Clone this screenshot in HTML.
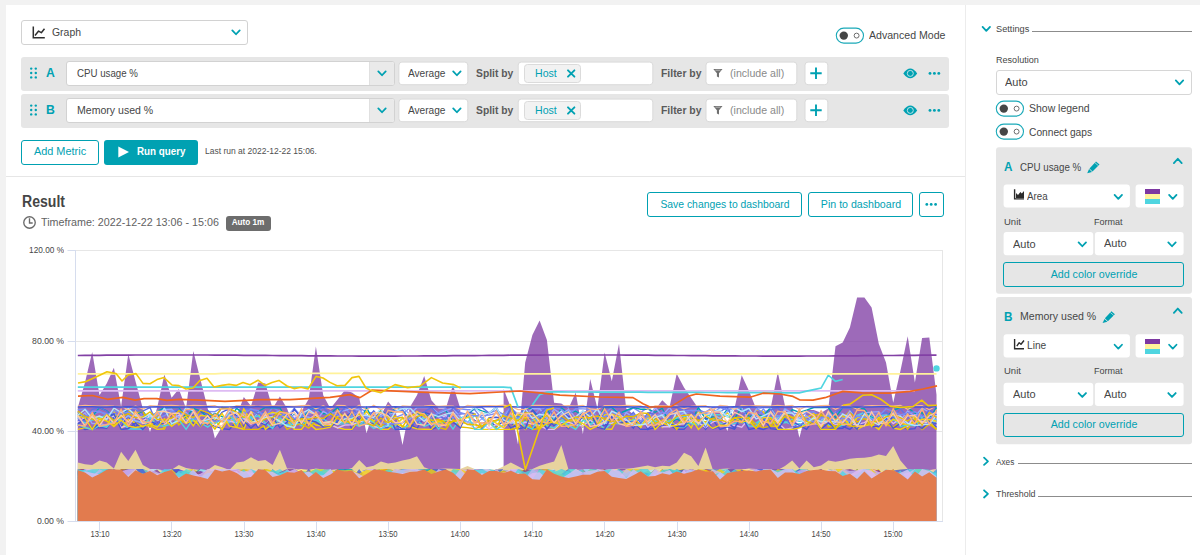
<!DOCTYPE html>
<html lang="en">
<head>
<meta charset="utf-8">
<title>Data explorer</title>
<style>
*{box-sizing:border-box;margin:0;padding:0}
html,body{width:1200px;height:555px;overflow:hidden;background:#f2f2f2}
body{font-family:"Liberation Sans",sans-serif;color:#454646;font-size:12px;position:relative}
.abs{position:absolute}
.t{position:absolute;white-space:nowrap;line-height:1}
.box{position:absolute;background:#fff;border:1px solid #d2d2d2;border-radius:3px}
.row{position:absolute;left:21px;width:928px;height:34px;background:#e6e6e6;border-radius:3px}
.card{position:absolute;left:996px;width:196px;height:146px;background:#e6e6e6;border-radius:3px}
svg{position:absolute;overflow:visible}
</style>
</head>
<body>
<div class="abs" style="left:6px;top:5px;width:959px;height:550px;background:#fff"></div>
<div class="abs" style="left:965px;top:5px;width:1px;height:550px;background:#ececec"></div>
<div class="abs" style="left:966px;top:5px;width:234px;height:550px;background:#fff"></div>

<div class="box" style="left:21px;top:20px;width:227px;height:25px;"></div>
<svg style="left:0;top:0" width="1200" height="555"><path d="M33.3 26.6 V37.7 H44.8" fill="none" stroke="#2f2f2f" stroke-width="1.5"/><path d="M35 35.4 L38.6 31.1 L41.3 32.7 L44.5 28.7" fill="none" stroke="#2f2f2f" stroke-width="1.5" stroke-linejoin="round"/></svg>
<div class="t" style="top:27.13px;font-size:10.6px;color:#454646;left:52.20px;transform-origin:0 50%;transform:scaleX(0.984);">Graph</div>
<svg style="left:0;top:0" width="1200" height="555"><path d="M232.30 30.35 L236.00 34.25 L239.70 30.35" fill="none" stroke="#00a1b2" stroke-width="1.8" stroke-linecap="round" stroke-linejoin="round"/></svg>
<svg style="left:0;top:0" width="1200" height="555"><rect x="836.3" y="28.1" width="27.2" height="15" rx="7.5" fill="#fff" stroke="#1aa9b8" stroke-width="1.1"/><circle cx="843.8" cy="35.6" r="4.2" fill="#454646"/><circle cx="856.6" cy="35.6" r="2.45" fill="none" stroke="#6d6d6d" stroke-width="1"/></svg>
<div class="t" style="top:30.43px;font-size:10.6px;color:#454646;left:869.30px;transform-origin:0 50%;transform:scaleX(0.999);">Advanced Mode</div>
<div class="row" style="top:57px"></div>
<svg style="left:0;top:0" width="1200" height="555"><circle cx="31.2" cy="68.6" r="1.2" fill="#00a1b2"/><circle cx="31.2" cy="73.0" r="1.2" fill="#00a1b2"/><circle cx="31.2" cy="77.4" r="1.2" fill="#00a1b2"/><circle cx="35.8" cy="68.6" r="1.2" fill="#00a1b2"/><circle cx="35.8" cy="73.0" r="1.2" fill="#00a1b2"/><circle cx="35.8" cy="77.4" r="1.2" fill="#00a1b2"/></svg>
<div class="t" style="top:66.00px;font-size:13px;color:#00a1b2;font-weight:bold;left:46.40px;transform-origin:0 50%;transform:scaleX(0.94);">A</div>
<div class="box" style="left:66px;top:61px;width:329px;height:25px;"></div>
<div class="abs" style="left:368.6px;top:62px;width:25.4px;height:23px;background:#eaeaea;border-left:1px solid #e0e0e0;border-radius:0 2px 2px 0"></div>
<div class="t" style="top:68.03px;font-size:10.6px;color:#454646;left:76.50px;transform-origin:0 50%;transform:scaleX(0.916);">CPU usage %</div>
<svg style="left:0;top:0" width="1200" height="555"><path d="M378.30 71.35 L382.00 75.25 L385.70 71.35" fill="none" stroke="#00a1b2" stroke-width="1.8" stroke-linecap="round" stroke-linejoin="round"/></svg>
<svg style="left:0;top:0" width="1200" height="555"><rect x="398.9" y="62.1" width="68.9" height="22.6" rx="3" fill="#fff" stroke="#dadada" stroke-width="1"/></svg>
<div class="t" style="top:68.03px;font-size:10.6px;color:#454646;left:407.80px;transform-origin:0 50%;transform:scaleX(0.954);">Average</div>
<svg style="left:0;top:0" width="1200" height="555"><path d="M453.20 71.35 L456.90 75.25 L460.60 71.35" fill="none" stroke="#00a1b2" stroke-width="1.8" stroke-linecap="round" stroke-linejoin="round"/></svg>
<div class="t" style="top:68.03px;font-size:10.6px;color:#5a5a5a;font-weight:bold;left:475.80px;transform-origin:0 50%;transform:scaleX(0.973);">Split by</div>
<svg style="left:0;top:0" width="1200" height="555"><rect x="518.2" y="62.1" width="134.6" height="22.6" rx="3" fill="#fff" stroke="#dadada" stroke-width="1"/></svg>
<div class="abs" style="left:524px;top:64px;width:57px;height:19px;background:#f2f2f2;border:1px solid #dbdbdb;border-radius:3.5px"></div>
<div class="t" style="top:68.13px;font-size:10.6px;color:#00a1b2;left:534.80px;transform-origin:0 50%;transform:scaleX(0.998);">Host</div>
<svg style="left:0;top:0" width="1200" height="555"><path d="M568 70.3 l6.4 6.4 m0 -6.4 l-6.4 6.4" stroke="#00a1b2" stroke-width="1.9" stroke-linecap="round" fill="none"/></svg>
<div class="t" style="top:68.03px;font-size:10.6px;color:#5a5a5a;font-weight:bold;left:660.50px;transform-origin:0 50%;transform:scaleX(0.982);">Filter by</div>
<svg style="left:0;top:0" width="1200" height="555"><rect x="706" y="62.1" width="90.8" height="22.6" rx="3" fill="#fff" stroke="#dadada" stroke-width="1"/></svg>
<svg style="left:0;top:0" width="1200" height="555"><path d="M713.3 69.0 H722.5 L719 73.3 V77.5 L716.9 76.5 V73.3 Z" fill="#6f6f6f"/><path d="M715.4 70.2 H720.4" stroke="#c9c9c9" stroke-width=".8"/></svg>
<div class="t" style="top:67.83px;font-size:10.6px;color:#8a8a8a;left:730.00px;transform-origin:0 50%;transform:scaleX(1.0);">(include all)</div>
<svg style="left:0;top:0" width="1200" height="555"><rect x="805" y="62.1" width="22.8" height="22.6" rx="3" fill="#fff" stroke="#dadada" stroke-width="1"/></svg>
<svg style="left:0;top:0" width="1200" height="555"><path d="M810.3 73.3 h11.4 M816 67.6 v11.4" stroke="#00a1b2" stroke-width="1.9" fill="none"/></svg>
<svg style="left:0;top:0" width="1200" height="555"><path d="M903.3 73.4 Q910.3 63.8 917.2 73.4 Q910.3 83.0 903.3 73.4z" fill="#00a1b2"/><circle cx="910.3" cy="73.4" r="3" fill="none" stroke="#cfe9ec" stroke-width=".9"/></svg>
<svg style="left:0;top:0" width="1200" height="555"><circle cx="930.0" cy="73.4" r="1.45" fill="#00a1b2"/><circle cx="934.4" cy="73.4" r="1.45" fill="#00a1b2"/><circle cx="938.8" cy="73.4" r="1.45" fill="#00a1b2"/></svg>
<div class="row" style="top:94px"></div>
<svg style="left:0;top:0" width="1200" height="555"><circle cx="31.2" cy="105.6" r="1.2" fill="#00a1b2"/><circle cx="31.2" cy="110.0" r="1.2" fill="#00a1b2"/><circle cx="31.2" cy="114.4" r="1.2" fill="#00a1b2"/><circle cx="35.8" cy="105.6" r="1.2" fill="#00a1b2"/><circle cx="35.8" cy="110.0" r="1.2" fill="#00a1b2"/><circle cx="35.8" cy="114.4" r="1.2" fill="#00a1b2"/></svg>
<div class="t" style="top:103.00px;font-size:13px;color:#00a1b2;font-weight:bold;left:46.40px;transform-origin:0 50%;transform:scaleX(0.94);">B</div>
<div class="box" style="left:66px;top:98px;width:329px;height:25px;"></div>
<div class="abs" style="left:368.6px;top:99px;width:25.4px;height:23px;background:#eaeaea;border-left:1px solid #e0e0e0;border-radius:0 2px 2px 0"></div>
<div class="t" style="top:105.03px;font-size:10.6px;color:#454646;left:76.50px;transform-origin:0 50%;transform:scaleX(0.996);">Memory used %</div>
<svg style="left:0;top:0" width="1200" height="555"><path d="M378.30 108.35 L382.00 112.25 L385.70 108.35" fill="none" stroke="#00a1b2" stroke-width="1.8" stroke-linecap="round" stroke-linejoin="round"/></svg>
<svg style="left:0;top:0" width="1200" height="555"><rect x="398.9" y="99.1" width="68.9" height="22.6" rx="3" fill="#fff" stroke="#dadada" stroke-width="1"/></svg>
<div class="t" style="top:105.03px;font-size:10.6px;color:#454646;left:407.80px;transform-origin:0 50%;transform:scaleX(0.954);">Average</div>
<svg style="left:0;top:0" width="1200" height="555"><path d="M453.20 108.35 L456.90 112.25 L460.60 108.35" fill="none" stroke="#00a1b2" stroke-width="1.8" stroke-linecap="round" stroke-linejoin="round"/></svg>
<div class="t" style="top:105.03px;font-size:10.6px;color:#5a5a5a;font-weight:bold;left:475.80px;transform-origin:0 50%;transform:scaleX(0.973);">Split by</div>
<svg style="left:0;top:0" width="1200" height="555"><rect x="518.2" y="99.1" width="134.6" height="22.6" rx="3" fill="#fff" stroke="#dadada" stroke-width="1"/></svg>
<div class="abs" style="left:524px;top:101px;width:57px;height:19px;background:#f2f2f2;border:1px solid #dbdbdb;border-radius:3.5px"></div>
<div class="t" style="top:105.13px;font-size:10.6px;color:#00a1b2;left:534.80px;transform-origin:0 50%;transform:scaleX(0.998);">Host</div>
<svg style="left:0;top:0" width="1200" height="555"><path d="M568 107.3 l6.4 6.4 m0 -6.4 l-6.4 6.4" stroke="#00a1b2" stroke-width="1.9" stroke-linecap="round" fill="none"/></svg>
<div class="t" style="top:105.03px;font-size:10.6px;color:#5a5a5a;font-weight:bold;left:660.50px;transform-origin:0 50%;transform:scaleX(0.982);">Filter by</div>
<svg style="left:0;top:0" width="1200" height="555"><rect x="706" y="99.1" width="90.8" height="22.6" rx="3" fill="#fff" stroke="#dadada" stroke-width="1"/></svg>
<svg style="left:0;top:0" width="1200" height="555"><path d="M713.3 106.0 H722.5 L719 110.3 V114.5 L716.9 113.5 V110.3 Z" fill="#6f6f6f"/><path d="M715.4 107.2 H720.4" stroke="#c9c9c9" stroke-width=".8"/></svg>
<div class="t" style="top:104.83px;font-size:10.6px;color:#8a8a8a;left:730.00px;transform-origin:0 50%;transform:scaleX(1.0);">(include all)</div>
<svg style="left:0;top:0" width="1200" height="555"><rect x="805" y="99.1" width="22.8" height="22.6" rx="3" fill="#fff" stroke="#dadada" stroke-width="1"/></svg>
<svg style="left:0;top:0" width="1200" height="555"><path d="M810.3 110.3 h11.4 M816 104.6 v11.4" stroke="#00a1b2" stroke-width="1.9" fill="none"/></svg>
<svg style="left:0;top:0" width="1200" height="555"><path d="M903.3 110.4 Q910.3 100.8 917.2 110.4 Q910.3 120.0 903.3 110.4z" fill="#00a1b2"/><circle cx="910.3" cy="110.4" r="3" fill="none" stroke="#cfe9ec" stroke-width=".9"/></svg>
<svg style="left:0;top:0" width="1200" height="555"><circle cx="930.0" cy="110.4" r="1.45" fill="#00a1b2"/><circle cx="934.4" cy="110.4" r="1.45" fill="#00a1b2"/><circle cx="938.8" cy="110.4" r="1.45" fill="#00a1b2"/></svg>
<div class="abs" style="left:21px;top:140px;width:77.5px;height:25px;border:1px solid #00a1b2;border-radius:3px;background:#fff"></div>
<div class="t" style="top:145.93px;font-size:10.6px;color:#00a1b2;left:-140.30px;width:400px;text-align:center;transform-origin:50% 50%;transform:scaleX(1.031);">Add Metric</div>
<div class="abs" style="left:104px;top:140px;width:94px;height:25px;border-radius:3px;background:#00a1b2"></div>
<svg style="left:0;top:0" width="1200" height="555"><path d="M118.3 146.4 L129 152 L118.3 157.6 Z" fill="#fff"/></svg>
<div class="t" style="top:145.93px;font-size:10.6px;color:#fff;font-weight:bold;left:137.00px;transform-origin:0 50%;transform:scaleX(0.925);">Run query</div>
<div class="t" style="top:146.78px;font-size:9px;color:#505050;left:204.70px;transform-origin:0 50%;transform:scaleX(0.944);">Last run at 2022-12-22 15:06.</div>
<div class="abs" style="left:6px;top:176px;width:959px;height:1px;background:#e6e6e6"></div>
<div class="t" style="top:193.56px;font-size:16px;color:#454646;font-weight:bold;left:21.70px;transform-origin:0 50%;transform:scaleX(0.879);">Result</div>
<svg style="left:0;top:0" width="1200" height="555"><circle cx="29.5" cy="222.5" r="5.75" fill="none" stroke="#6a6a6a" stroke-width="1.35"/><path d="M29.5 218.2 V223 H32.7" fill="none" stroke="#6a6a6a" stroke-width="1.35"/></svg>
<div class="t" style="top:216.38px;font-size:11.6px;color:#626262;left:41.00px;transform-origin:0 50%;transform:scaleX(0.925);">Timeframe: 2022-12-22 13:06 - 15:06</div>
<div class="abs" style="left:226px;top:216px;width:44.5px;height:14.5px;border-radius:3px;background:#6d6d6d"></div>
<div class="t" style="top:218.31px;font-size:9.2px;color:#fff;font-weight:bold;left:48.00px;width:400px;text-align:center;transform-origin:50% 50%;transform:scaleX(0.89);">Auto 1m</div>
<div class="abs" style="left:647px;top:192px;width:155px;height:25px;border:1px solid #00a1b2;border-radius:3px;background:#fff"></div>
<div class="t" style="top:198.53px;font-size:10.6px;color:#00a1b2;left:524.50px;width:400px;text-align:center;transform-origin:50% 50%;transform:scaleX(0.979);">Save changes to dashboard</div>
<div class="abs" style="left:808px;top:192px;width:105px;height:25px;border:1px solid #00a1b2;border-radius:3px;background:#fff"></div>
<div class="t" style="top:198.53px;font-size:10.6px;color:#00a1b2;left:660.50px;width:400px;text-align:center;transform-origin:50% 50%;transform:scaleX(1.002);">Pin to dashboard</div>
<div class="abs" style="left:919px;top:192px;width:25px;height:25px;border:1px solid #00a1b2;border-radius:3px;background:#fff"></div>
<svg style="left:0;top:0" width="1200" height="555"><circle cx="926.8" cy="204.4" r="1.4" fill="#00a1b2"/><circle cx="931.2" cy="204.4" r="1.4" fill="#00a1b2"/><circle cx="935.6" cy="204.4" r="1.4" fill="#00a1b2"/></svg>
<svg style="left:0;top:0" width="1200" height="555"><path d="M75 250.5 H942" stroke="#e6e6e6" stroke-width="1"/><path d="M75 341.5 H942" stroke="#e6e6e6" stroke-width="1"/><path d="M75 431.5 H942" stroke="#e6e6e6" stroke-width="1"/><path d="M67.5 250.5 H75" stroke="#d6ddee" stroke-width="1"/><path d="M67.5 341.5 H75" stroke="#d6ddee" stroke-width="1"/><path d="M67.5 431.5 H75" stroke="#d6ddee" stroke-width="1"/><path d="M67.5 521.5 H75" stroke="#d6ddee" stroke-width="1"/><path d="M77.8 521.4 L77.8 407.5 L85.0 382.4 L92.2 352.1 L99.5 395.3 L106.7 383.5 L113.9 367.7 L121.1 406.6 L128.3 353.9 L135.5 381.3 L142.8 408.4 L150.0 432.1 L157.2 407.5 L164.4 374.5 L171.6 397.8 L178.8 389.0 L186.1 408.4 L193.3 351.0 L200.5 379.7 L207.7 408.4 L214.9 438.5 L222.1 426.5 L229.4 408.2 L236.6 416.5 L243.8 397.1 L251.0 406.1 L258.2 382.6 L265.4 383.5 L272.6 408.4 L279.9 396.4 L287.1 408.4 L294.3 428.7 L301.5 411.5 L308.7 398.9 L315.9 346.5 L323.2 395.3 L330.4 408.4 L337.6 399.4 L344.8 390.3 L352.0 392.6 L359.2 397.8 L366.5 433.3 L373.7 410.8 L380.9 415.8 L388.1 401.4 L395.3 410.2 L402.5 445.0 L409.8 407.3 L417.0 395.3 L424.2 375.9 L431.4 400.3 L438.6 408.4 L445.8 408.4 L453.0 385.1 L460.3 408.4 L460.3 521.4 Z" fill="#7c38a1" fill-opacity=".75"/><path d="M503.6 521.4 L503.6 389.0 L510.8 407.3 L518.0 444.6 L525.2 362.5 L532.4 334.9 L539.6 320.5 L546.9 339.9 L554.1 402.8 L561.3 403.4 L568.5 408.4 L575.7 392.6 L582.9 433.9 L590.2 379.0 L597.4 408.4 L604.6 352.6 L611.8 381.3 L619.0 343.8 L626.2 408.4 L633.4 414.5 L640.7 428.7 L647.9 412.4 L655.1 409.4 L662.3 400.3 L669.5 407.3 L676.7 373.8 L684.0 387.6 L691.2 398.0 L698.4 408.4 L705.6 427.6 L712.8 408.5 L720.0 412.3 L727.3 431.0 L734.5 408.4 L741.7 375.2 L748.9 390.8 L756.1 408.4 L763.3 411.9 L770.6 408.4 L777.8 372.2 L785.0 406.1 L792.2 406.1 L799.4 437.8 L806.6 410.1 L813.8 410.1 L821.1 412.7 L828.3 408.4 L835.5 346.2 L842.7 342.6 L849.9 327.5 L857.1 297.4 L864.4 297.4 L871.6 307.6 L878.8 343.8 L886.0 362.5 L893.2 402.8 L900.4 371.1 L907.7 336.3 L914.9 382.6 L922.1 338.1 L929.3 337.4 L936.5 394.8 L936.5 521.4 Z" fill="#7c38a1" fill-opacity=".75"/><path d="M77.8 521.4 L77.8 462.6 L85.0 464.2 L92.2 464.9 L99.5 460.4 L106.7 462.6 L113.9 468.5 L121.1 451.8 L128.3 461.1 L135.5 449.8 L142.8 464.9 L150.0 469.0 L157.2 470.1 L164.4 470.1 L171.6 469.7 L178.8 464.9 L186.1 468.1 L193.3 469.2 L200.5 470.1 L207.7 469.9 L214.9 464.9 L222.1 467.2 L229.4 470.1 L236.6 462.6 L243.8 461.5 L251.0 457.2 L258.2 461.1 L265.4 459.9 L272.6 464.9 L279.9 449.8 L287.1 468.5 L294.3 468.8 L301.5 470.0 L308.7 470.3 L315.9 468.6 L323.2 469.4 L330.4 470.1 L337.6 469.3 L344.8 470.3 L352.0 468.1 L359.2 459.9 L366.5 467.2 L373.7 465.8 L380.9 461.5 L388.1 463.5 L395.3 462.6 L402.5 460.4 L409.8 459.0 L417.0 456.3 L424.2 467.2 L431.4 469.9 L438.6 468.9 L445.8 468.5 L453.0 468.8 L460.3 468.9 L467.5 466.0 L474.7 469.0 L481.9 469.9 L489.1 469.4 L496.3 469.7 L503.6 466.3 L510.8 462.6 L518.0 466.3 L525.2 469.9 L532.4 469.1 L539.6 465.8 L546.9 463.5 L554.1 461.5 L561.3 445.0 L568.5 469.4 L575.7 469.7 L582.9 469.9 L590.2 469.9 L597.4 470.0 L604.6 470.0 L611.8 469.2 L619.0 468.7 L626.2 468.8 L633.4 468.1 L640.7 466.7 L647.9 465.4 L655.1 467.2 L662.3 465.8 L669.5 466.3 L676.7 462.6 L684.0 452.7 L691.2 456.3 L698.4 466.0 L705.6 447.5 L712.8 469.4 L720.0 468.9 L727.3 468.6 L734.5 469.6 L741.7 469.6 L748.9 468.6 L756.1 469.0 L763.3 470.0 L770.6 470.1 L777.8 470.1 L785.0 466.0 L792.2 460.4 L799.4 468.5 L806.6 460.4 L813.8 467.2 L821.1 465.4 L828.3 460.4 L835.5 461.7 L842.7 460.4 L849.9 458.8 L857.1 458.1 L864.4 457.7 L871.6 456.8 L878.8 454.5 L886.0 456.1 L893.2 446.1 L900.4 460.4 L907.7 469.0 L914.9 469.9 L922.1 469.8 L929.3 469.9 L936.5 469.3 L936.5 521.4 Z" fill="#e8d39e"/><path d="M77.8 521.4 L77.8 476.2 L85.0 474.3 L92.2 477.8 L99.5 469.0 L106.7 475.0 L113.9 473.8 L121.1 472.2 L128.3 469.0 L135.5 474.2 L142.8 469.0 L150.0 473.2 L157.2 472.9 L164.4 473.0 L171.6 479.1 L178.8 474.0 L186.1 477.1 L193.3 479.3 L200.5 469.6 L207.7 477.3 L214.9 473.6 L222.1 470.5 L229.4 472.6 L236.6 475.4 L243.8 473.0 L251.0 472.6 L258.2 469.8 L265.4 478.1 L272.6 472.5 L279.9 476.3 L287.1 476.0 L294.3 469.9 L301.5 473.2 L308.7 472.5 L315.9 470.1 L323.2 469.0 L330.4 474.0 L337.6 471.9 L344.8 473.2 L352.0 473.1 L359.2 470.9 L366.5 473.8 L373.7 472.9 L380.9 473.5 L388.1 469.0 L395.3 470.8 L402.5 469.0 L409.8 469.0 L417.0 476.2 L424.2 472.5 L431.4 469.0 L438.6 469.1 L445.8 477.7 L453.0 477.9 L460.3 474.0 L467.5 478.5 L474.7 476.4 L481.9 478.5 L489.1 471.2 L496.3 469.8 L503.6 469.0 L510.8 477.5 L518.0 470.6 L525.2 471.3 L532.4 477.6 L539.6 469.0 L546.9 469.0 L554.1 476.7 L561.3 469.0 L568.5 474.5 L575.7 473.4 L582.9 469.0 L590.2 469.2 L597.4 477.4 L604.6 474.1 L611.8 473.1 L619.0 475.2 L626.2 477.0 L633.4 475.5 L640.7 470.6 L647.9 479.1 L655.1 472.6 L662.3 474.0 L669.5 479.1 L676.7 475.3 L684.0 471.7 L691.2 473.1 L698.4 478.6 L705.6 469.0 L712.8 469.7 L720.0 469.0 L727.3 478.1 L734.5 476.1 L741.7 478.9 L748.9 469.9 L756.1 476.1 L763.3 477.8 L770.6 474.2 L777.8 469.0 L785.0 469.4 L792.2 476.2 L799.4 477.5 L806.6 469.0 L813.8 472.4 L821.1 470.8 L828.3 478.3 L835.5 478.7 L842.7 471.0 L849.9 474.2 L857.1 478.5 L864.4 469.0 L871.6 471.6 L878.8 469.6 L886.0 478.3 L893.2 469.0 L900.4 478.6 L907.7 469.0 L914.9 473.8 L922.1 475.2 L929.3 472.6 L936.5 469.0 L936.5 521.4 Z" fill="#4556d7" fill-opacity=".78"/><path d="M77.8 521.4 L77.8 476.1 L85.0 477.8 L92.2 472.9 L99.5 476.5 L106.7 478.0 L113.9 477.4 L121.1 478.7 L128.3 476.9 L135.5 475.6 L142.8 475.6 L150.0 470.1 L157.2 475.8 L164.4 473.3 L171.6 477.2 L178.8 475.1 L186.1 479.1 L193.3 476.3 L200.5 479.2 L207.7 470.4 L214.9 472.6 L222.1 477.1 L229.4 473.6 L236.6 469.0 L243.8 478.1 L251.0 469.4 L258.2 474.1 L265.4 473.3 L272.6 469.2 L279.9 474.6 L287.1 473.2 L294.3 471.0 L301.5 469.0 L308.7 475.2 L315.9 469.2 L323.2 470.7 L330.4 471.6 L337.6 474.4 L344.8 475.1 L352.0 478.7 L359.2 477.8 L366.5 478.5 L373.7 470.3 L380.9 476.2 L388.1 477.4 L395.3 478.3 L402.5 469.1 L409.8 469.0 L417.0 471.2 L424.2 475.9 L431.4 476.4 L438.6 475.8 L445.8 473.8 L453.0 477.4 L460.3 473.9 L467.5 476.2 L474.7 469.0 L481.9 469.0 L489.1 472.7 L496.3 476.4 L503.6 469.0 L510.8 475.6 L518.0 475.0 L525.2 479.4 L532.4 474.7 L539.6 473.6 L546.9 473.2 L554.1 476.9 L561.3 473.2 L568.5 479.3 L575.7 476.1 L582.9 478.3 L590.2 474.5 L597.4 478.9 L604.6 479.1 L611.8 475.7 L619.0 476.5 L626.2 472.2 L633.4 472.9 L640.7 470.2 L647.9 471.3 L655.1 470.6 L662.3 469.0 L669.5 474.6 L676.7 475.4 L684.0 469.0 L691.2 477.5 L698.4 470.5 L705.6 471.5 L712.8 478.8 L720.0 469.2 L727.3 469.0 L734.5 471.7 L741.7 470.4 L748.9 469.5 L756.1 477.7 L763.3 473.0 L770.6 473.2 L777.8 469.2 L785.0 469.5 L792.2 469.3 L799.4 472.2 L806.6 469.0 L813.8 471.0 L821.1 470.9 L828.3 476.6 L835.5 479.0 L842.7 477.7 L849.9 475.0 L857.1 478.1 L864.4 469.2 L871.6 472.5 L878.8 471.7 L886.0 471.7 L893.2 471.1 L900.4 473.4 L907.7 479.3 L914.9 469.6 L922.1 470.2 L929.3 473.2 L936.5 472.8 L936.5 521.4 Z" fill="#fff29a" fill-opacity=".78"/><path d="M77.8 521.4 L77.8 471.3 L85.0 478.6 L92.2 470.4 L99.5 476.3 L106.7 478.5 L113.9 476.1 L121.1 470.5 L128.3 476.9 L135.5 470.3 L142.8 469.0 L150.0 473.3 L157.2 474.7 L164.4 473.5 L171.6 471.0 L178.8 470.0 L186.1 471.8 L193.3 471.5 L200.5 478.4 L207.7 477.6 L214.9 476.3 L222.1 470.3 L229.4 475.6 L236.6 472.4 L243.8 479.2 L251.0 478.6 L258.2 476.1 L265.4 471.2 L272.6 470.9 L279.9 471.1 L287.1 475.8 L294.3 473.1 L301.5 473.7 L308.7 473.7 L315.9 477.9 L323.2 469.0 L330.4 476.9 L337.6 469.0 L344.8 469.0 L352.0 479.2 L359.2 473.8 L366.5 469.4 L373.7 469.0 L380.9 473.9 L388.1 476.1 L395.3 476.8 L402.5 469.0 L409.8 476.8 L417.0 472.3 L424.2 477.6 L431.4 473.0 L438.6 469.0 L445.8 477.7 L453.0 469.4 L460.3 473.2 L467.5 469.0 L474.7 470.8 L481.9 476.5 L489.1 469.0 L496.3 473.4 L503.6 479.1 L510.8 479.3 L518.0 473.4 L525.2 473.9 L532.4 475.7 L539.6 477.6 L546.9 475.2 L554.1 475.5 L561.3 469.1 L568.5 479.3 L575.7 470.2 L582.9 469.1 L590.2 477.9 L597.4 469.0 L604.6 470.7 L611.8 469.0 L619.0 475.8 L626.2 474.8 L633.4 474.6 L640.7 469.0 L647.9 472.2 L655.1 475.0 L662.3 474.1 L669.5 476.0 L676.7 478.8 L684.0 478.1 L691.2 469.2 L698.4 475.9 L705.6 469.0 L712.8 476.3 L720.0 476.1 L727.3 473.1 L734.5 477.0 L741.7 474.8 L748.9 469.0 L756.1 469.0 L763.3 469.5 L770.6 471.7 L777.8 469.0 L785.0 469.0 L792.2 472.7 L799.4 470.6 L806.6 478.8 L813.8 470.4 L821.1 473.9 L828.3 470.2 L835.5 471.5 L842.7 475.9 L849.9 478.8 L857.1 469.0 L864.4 477.8 L871.6 473.6 L878.8 475.2 L886.0 475.7 L893.2 470.3 L900.4 469.0 L907.7 476.2 L914.9 471.4 L922.1 475.7 L929.3 472.6 L936.5 474.6 L936.5 521.4 Z" fill="#c396e0" fill-opacity=".78"/><path d="M77.8 521.4 L77.8 477.3 L85.0 477.4 L92.2 476.8 L99.5 469.0 L106.7 473.3 L113.9 476.7 L121.1 469.0 L128.3 469.0 L135.5 473.9 L142.8 477.7 L150.0 477.0 L157.2 478.3 L164.4 475.2 L171.6 478.3 L178.8 476.4 L186.1 476.2 L193.3 472.4 L200.5 469.0 L207.7 470.2 L214.9 474.3 L222.1 474.3 L229.4 473.0 L236.6 474.8 L243.8 475.2 L251.0 478.6 L258.2 476.0 L265.4 469.0 L272.6 477.8 L279.9 473.2 L287.1 471.7 L294.3 469.0 L301.5 476.7 L308.7 476.1 L315.9 476.3 L323.2 474.5 L330.4 473.9 L337.6 469.0 L344.8 469.0 L352.0 469.0 L359.2 479.1 L366.5 479.0 L373.7 470.7 L380.9 469.0 L388.1 473.6 L395.3 472.2 L402.5 479.4 L409.8 474.6 L417.0 469.0 L424.2 469.3 L431.4 469.0 L438.6 469.0 L445.8 476.3 L453.0 478.0 L460.3 477.5 L467.5 473.0 L474.7 471.0 L481.9 469.0 L489.1 470.6 L496.3 471.5 L503.6 470.0 L510.8 473.8 L518.0 472.6 L525.2 478.9 L532.4 469.8 L539.6 476.5 L546.9 469.0 L554.1 471.5 L561.3 475.7 L568.5 477.8 L575.7 476.3 L582.9 471.6 L590.2 470.8 L597.4 478.0 L604.6 478.5 L611.8 473.0 L619.0 472.3 L626.2 474.6 L633.4 476.6 L640.7 472.0 L647.9 479.2 L655.1 475.7 L662.3 473.7 L669.5 469.0 L676.7 471.5 L684.0 469.0 L691.2 473.6 L698.4 476.5 L705.6 476.3 L712.8 469.0 L720.0 470.8 L727.3 475.6 L734.5 479.1 L741.7 473.3 L748.9 471.1 L756.1 474.2 L763.3 476.2 L770.6 471.2 L777.8 469.0 L785.0 476.6 L792.2 478.9 L799.4 475.2 L806.6 474.2 L813.8 471.0 L821.1 476.9 L828.3 469.6 L835.5 470.3 L842.7 473.2 L849.9 476.9 L857.1 469.0 L864.4 475.6 L871.6 469.4 L878.8 476.5 L886.0 476.7 L893.2 470.1 L900.4 475.8 L907.7 469.0 L914.9 473.3 L922.1 477.1 L929.3 476.6 L936.5 474.3 L936.5 521.4 Z" fill="#00a1b2" fill-opacity=".78"/><path d="M77.8 521.4 L77.8 471.2 L85.0 469.0 L92.2 477.6 L99.5 474.6 L106.7 476.8 L113.9 469.0 L121.1 477.6 L128.3 478.7 L135.5 478.6 L142.8 474.6 L150.0 469.0 L157.2 469.0 L164.4 470.4 L171.6 469.0 L178.8 469.0 L186.1 475.3 L193.3 477.1 L200.5 469.0 L207.7 470.3 L214.9 479.0 L222.1 471.3 L229.4 474.7 L236.6 474.8 L243.8 475.3 L251.0 477.3 L258.2 479.3 L265.4 475.9 L272.6 475.1 L279.9 469.0 L287.1 477.9 L294.3 469.0 L301.5 476.8 L308.7 475.0 L315.9 469.3 L323.2 469.3 L330.4 474.1 L337.6 478.8 L344.8 473.6 L352.0 474.8 L359.2 469.0 L366.5 477.0 L373.7 474.9 L380.9 469.0 L388.1 479.0 L395.3 474.4 L402.5 469.5 L409.8 470.0 L417.0 478.9 L424.2 478.9 L431.4 478.6 L438.6 469.0 L445.8 476.2 L453.0 470.2 L460.3 469.0 L467.5 475.2 L474.7 476.0 L481.9 469.0 L489.1 471.8 L496.3 476.2 L503.6 470.6 L510.8 475.5 L518.0 476.0 L525.2 479.3 L532.4 470.1 L539.6 469.0 L546.9 471.6 L554.1 469.0 L561.3 479.1 L568.5 476.5 L575.7 473.6 L582.9 469.0 L590.2 469.0 L597.4 474.6 L604.6 476.3 L611.8 474.1 L619.0 473.3 L626.2 469.0 L633.4 477.1 L640.7 469.6 L647.9 470.4 L655.1 469.3 L662.3 469.9 L669.5 472.0 L676.7 475.4 L684.0 475.5 L691.2 474.9 L698.4 469.8 L705.6 478.4 L712.8 477.0 L720.0 470.2 L727.3 476.3 L734.5 478.6 L741.7 479.0 L748.9 472.6 L756.1 475.4 L763.3 469.0 L770.6 469.0 L777.8 469.0 L785.0 476.1 L792.2 478.3 L799.4 478.2 L806.6 473.3 L813.8 470.7 L821.1 473.9 L828.3 476.5 L835.5 474.3 L842.7 471.8 L849.9 471.1 L857.1 470.2 L864.4 469.0 L871.6 471.3 L878.8 477.9 L886.0 469.1 L893.2 475.8 L900.4 472.4 L907.7 474.8 L914.9 470.4 L922.1 476.9 L929.3 476.3 L936.5 476.4 L936.5 521.4 Z" fill="#b4e5f9" fill-opacity=".78"/><path d="M77.8 521.4 L77.8 477.5 L85.0 469.0 L92.2 472.3 L99.5 475.4 L106.7 474.5 L113.9 469.0 L121.1 473.2 L128.3 476.5 L135.5 469.5 L142.8 471.4 L150.0 469.0 L157.2 478.1 L164.4 473.6 L171.6 469.4 L178.8 469.1 L186.1 469.0 L193.3 478.9 L200.5 475.8 L207.7 477.9 L214.9 477.1 L222.1 469.0 L229.4 472.2 L236.6 469.0 L243.8 474.8 L251.0 469.0 L258.2 473.9 L265.4 476.2 L272.6 469.9 L279.9 469.0 L287.1 478.1 L294.3 472.1 L301.5 471.8 L308.7 476.7 L315.9 474.9 L323.2 477.6 L330.4 476.9 L337.6 476.3 L344.8 472.0 L352.0 471.4 L359.2 476.9 L366.5 479.2 L373.7 475.4 L380.9 471.1 L388.1 477.1 L395.3 475.6 L402.5 476.9 L409.8 469.7 L417.0 472.7 L424.2 478.6 L431.4 478.1 L438.6 474.5 L445.8 472.7 L453.0 471.6 L460.3 478.3 L467.5 477.4 L474.7 470.9 L481.9 474.4 L489.1 475.9 L496.3 475.6 L503.6 469.0 L510.8 475.6 L518.0 472.5 L525.2 475.0 L532.4 474.3 L539.6 469.0 L546.9 469.0 L554.1 474.9 L561.3 477.0 L568.5 470.5 L575.7 476.9 L582.9 479.3 L590.2 469.0 L597.4 474.2 L604.6 469.4 L611.8 474.4 L619.0 469.0 L626.2 473.7 L633.4 477.4 L640.7 479.2 L647.9 472.6 L655.1 471.5 L662.3 469.0 L669.5 478.3 L676.7 471.8 L684.0 474.8 L691.2 473.2 L698.4 477.6 L705.6 475.9 L712.8 473.0 L720.0 469.0 L727.3 478.0 L734.5 473.4 L741.7 469.5 L748.9 469.0 L756.1 477.0 L763.3 477.8 L770.6 469.0 L777.8 469.0 L785.0 473.5 L792.2 478.7 L799.4 469.0 L806.6 474.6 L813.8 469.0 L821.1 471.8 L828.3 469.3 L835.5 477.4 L842.7 469.8 L849.9 476.7 L857.1 474.4 L864.4 469.0 L871.6 469.2 L878.8 477.1 L886.0 476.7 L893.2 474.5 L900.4 473.0 L907.7 474.7 L914.9 477.9 L922.1 476.3 L929.3 470.5 L936.5 469.0 L936.5 521.4 Z" fill="#ffd0ab" fill-opacity=".78"/><path d="M77.8 521.4 L77.8 478.9 L85.0 472.5 L92.2 470.1 L99.5 478.9 L106.7 469.1 L113.9 477.9 L121.1 472.0 L128.3 472.7 L135.5 471.7 L142.8 475.6 L150.0 474.2 L157.2 472.3 L164.4 474.2 L171.6 471.3 L178.8 473.9 L186.1 474.0 L193.3 479.1 L200.5 471.8 L207.7 473.4 L214.9 476.5 L222.1 470.0 L229.4 469.8 L236.6 473.8 L243.8 477.2 L251.0 473.6 L258.2 478.1 L265.4 477.8 L272.6 474.1 L279.9 478.2 L287.1 474.0 L294.3 473.1 L301.5 478.9 L308.7 471.6 L315.9 478.4 L323.2 470.4 L330.4 469.9 L337.6 473.1 L344.8 478.7 L352.0 473.2 L359.2 474.8 L366.5 469.0 L373.7 477.7 L380.9 469.0 L388.1 469.0 L395.3 470.4 L402.5 469.4 L409.8 477.0 L417.0 469.0 L424.2 473.4 L431.4 469.0 L438.6 469.0 L445.8 477.3 L453.0 469.7 L460.3 469.0 L467.5 478.6 L474.7 475.1 L481.9 470.1 L489.1 477.4 L496.3 469.0 L503.6 476.0 L510.8 469.4 L518.0 477.6 L525.2 473.2 L532.4 469.0 L539.6 476.8 L546.9 476.2 L554.1 473.2 L561.3 475.5 L568.5 478.9 L575.7 477.1 L582.9 477.4 L590.2 469.0 L597.4 471.1 L604.6 469.0 L611.8 477.3 L619.0 469.8 L626.2 478.0 L633.4 472.9 L640.7 471.6 L647.9 475.0 L655.1 469.0 L662.3 472.6 L669.5 472.3 L676.7 469.0 L684.0 478.1 L691.2 469.0 L698.4 471.7 L705.6 474.6 L712.8 469.6 L720.0 476.1 L727.3 469.0 L734.5 472.3 L741.7 475.0 L748.9 470.0 L756.1 474.0 L763.3 477.2 L770.6 470.3 L777.8 478.8 L785.0 469.4 L792.2 476.3 L799.4 471.6 L806.6 469.0 L813.8 472.2 L821.1 471.3 L828.3 475.5 L835.5 479.3 L842.7 479.0 L849.9 477.5 L857.1 471.8 L864.4 474.1 L871.6 473.1 L878.8 469.0 L886.0 477.8 L893.2 476.6 L900.4 471.4 L907.7 479.1 L914.9 479.3 L922.1 475.0 L929.3 478.1 L936.5 475.0 L936.5 521.4 Z" fill="#f5d30f" fill-opacity=".78"/><path d="M77.8 521.4 L77.8 476.6 L85.0 472.2 L92.2 472.2 L99.5 476.9 L106.7 471.7 L113.9 473.6 L121.1 477.7 L128.3 469.0 L135.5 476.4 L142.8 477.5 L150.0 478.2 L157.2 471.6 L164.4 469.0 L171.6 469.8 L178.8 474.5 L186.1 476.1 L193.3 479.2 L200.5 471.5 L207.7 472.5 L214.9 475.1 L222.1 471.5 L229.4 473.9 L236.6 469.0 L243.8 470.4 L251.0 476.3 L258.2 469.0 L265.4 478.8 L272.6 472.9 L279.9 474.4 L287.1 476.5 L294.3 478.7 L301.5 469.9 L308.7 479.2 L315.9 472.6 L323.2 469.0 L330.4 477.6 L337.6 476.9 L344.8 471.9 L352.0 473.2 L359.2 471.5 L366.5 469.4 L373.7 477.2 L380.9 475.6 L388.1 475.7 L395.3 478.8 L402.5 469.0 L409.8 469.8 L417.0 470.6 L424.2 479.3 L431.4 469.1 L438.6 470.3 L445.8 473.7 L453.0 470.3 L460.3 473.8 L467.5 476.6 L474.7 478.1 L481.9 476.5 L489.1 478.9 L496.3 475.3 L503.6 470.2 L510.8 470.9 L518.0 469.0 L525.2 470.7 L532.4 476.1 L539.6 472.6 L546.9 474.0 L554.1 469.7 L561.3 473.0 L568.5 476.1 L575.7 471.5 L582.9 469.0 L590.2 476.7 L597.4 469.0 L604.6 479.2 L611.8 476.2 L619.0 476.5 L626.2 470.3 L633.4 469.0 L640.7 470.3 L647.9 475.4 L655.1 469.0 L662.3 475.4 L669.5 476.4 L676.7 469.0 L684.0 471.7 L691.2 470.9 L698.4 471.2 L705.6 469.0 L712.8 473.6 L720.0 469.1 L727.3 470.9 L734.5 469.0 L741.7 474.0 L748.9 470.5 L756.1 472.4 L763.3 475.6 L770.6 476.8 L777.8 471.8 L785.0 478.4 L792.2 469.0 L799.4 477.6 L806.6 479.0 L813.8 478.1 L821.1 469.0 L828.3 475.2 L835.5 477.6 L842.7 479.0 L849.9 478.9 L857.1 470.9 L864.4 471.6 L871.6 470.9 L878.8 470.4 L886.0 478.6 L893.2 472.2 L900.4 474.9 L907.7 469.4 L914.9 469.4 L922.1 469.0 L929.3 478.6 L936.5 469.0 L936.5 521.4 Z" fill="#7c8cf4" fill-opacity=".78"/><path d="M77.8 521.4 L77.8 469.0 L85.0 469.0 L92.2 478.1 L99.5 476.9 L106.7 478.0 L113.9 478.9 L121.1 469.0 L128.3 469.5 L135.5 471.6 L142.8 469.3 L150.0 471.7 L157.2 475.9 L164.4 478.1 L171.6 478.2 L178.8 470.1 L186.1 476.9 L193.3 475.5 L200.5 474.2 L207.7 479.1 L214.9 476.2 L222.1 475.9 L229.4 470.6 L236.6 474.9 L243.8 475.4 L251.0 469.0 L258.2 473.2 L265.4 469.0 L272.6 471.8 L279.9 479.0 L287.1 474.3 L294.3 474.0 L301.5 469.9 L308.7 475.1 L315.9 470.8 L323.2 472.8 L330.4 476.7 L337.6 469.0 L344.8 478.3 L352.0 469.4 L359.2 477.3 L366.5 479.3 L373.7 476.9 L380.9 470.1 L388.1 469.0 L395.3 479.3 L402.5 473.4 L409.8 473.4 L417.0 469.6 L424.2 477.1 L431.4 473.3 L438.6 475.1 L445.8 469.2 L453.0 476.2 L460.3 469.0 L467.5 475.9 L474.7 476.7 L481.9 470.8 L489.1 473.3 L496.3 478.0 L503.6 471.6 L510.8 478.4 L518.0 469.7 L525.2 470.9 L532.4 469.8 L539.6 471.7 L546.9 475.0 L554.1 474.5 L561.3 474.5 L568.5 469.0 L575.7 478.3 L582.9 469.0 L590.2 479.1 L597.4 476.8 L604.6 476.2 L611.8 469.0 L619.0 473.2 L626.2 474.7 L633.4 469.0 L640.7 476.5 L647.9 473.7 L655.1 472.9 L662.3 470.2 L669.5 470.2 L676.7 471.5 L684.0 475.1 L691.2 475.4 L698.4 477.5 L705.6 469.1 L712.8 471.3 L720.0 470.3 L727.3 477.3 L734.5 474.0 L741.7 469.9 L748.9 472.3 L756.1 477.8 L763.3 473.7 L770.6 469.0 L777.8 476.5 L785.0 477.0 L792.2 475.7 L799.4 470.8 L806.6 469.1 L813.8 477.5 L821.1 477.5 L828.3 476.3 L835.5 475.4 L842.7 473.0 L849.9 477.4 L857.1 475.4 L864.4 477.1 L871.6 469.0 L878.8 470.5 L886.0 478.1 L893.2 469.0 L900.4 478.1 L907.7 474.7 L914.9 469.0 L922.1 469.7 L929.3 470.4 L936.5 474.1 L936.5 521.4 Z" fill="#ef651f" fill-opacity=".78"/><path d="M77.8 521.4 L77.8 477.0 L85.0 471.6 L92.2 478.1 L99.5 476.8 L106.7 474.6 L113.9 478.9 L121.1 474.5 L128.3 469.7 L135.5 470.9 L142.8 473.3 L150.0 471.6 L157.2 473.7 L164.4 477.6 L171.6 472.0 L178.8 474.4 L186.1 470.3 L193.3 469.0 L200.5 474.1 L207.7 472.4 L214.9 470.2 L222.1 474.2 L229.4 476.6 L236.6 470.6 L243.8 469.0 L251.0 469.9 L258.2 470.8 L265.4 469.0 L272.6 471.1 L279.9 471.5 L287.1 473.8 L294.3 475.5 L301.5 471.7 L308.7 478.2 L315.9 474.2 L323.2 469.8 L330.4 470.7 L337.6 471.7 L344.8 476.3 L352.0 474.2 L359.2 473.8 L366.5 471.8 L373.7 474.4 L380.9 471.1 L388.1 469.0 L395.3 477.1 L402.5 471.4 L409.8 469.9 L417.0 474.6 L424.2 473.4 L431.4 469.0 L438.6 478.9 L445.8 472.7 L453.0 477.4 L460.3 469.8 L467.5 469.0 L474.7 473.0 L481.9 478.1 L489.1 472.4 L496.3 472.8 L503.6 470.6 L510.8 473.1 L518.0 471.6 L525.2 469.2 L532.4 473.0 L539.6 474.4 L546.9 469.0 L554.1 476.8 L561.3 471.0 L568.5 474.6 L575.7 470.1 L582.9 477.9 L590.2 469.0 L597.4 475.0 L604.6 478.7 L611.8 476.0 L619.0 474.5 L626.2 479.2 L633.4 474.3 L640.7 474.2 L647.9 470.8 L655.1 475.1 L662.3 476.1 L669.5 476.6 L676.7 470.3 L684.0 469.0 L691.2 472.9 L698.4 476.7 L705.6 469.6 L712.8 474.6 L720.0 476.8 L727.3 477.8 L734.5 469.9 L741.7 469.5 L748.9 471.6 L756.1 473.6 L763.3 472.5 L770.6 476.6 L777.8 469.0 L785.0 475.1 L792.2 471.6 L799.4 469.4 L806.6 469.4 L813.8 473.7 L821.1 475.8 L828.3 472.7 L835.5 477.8 L842.7 469.2 L849.9 475.0 L857.1 469.0 L864.4 476.1 L871.6 474.8 L878.8 476.3 L886.0 474.2 L893.2 477.1 L900.4 479.3 L907.7 470.6 L914.9 475.9 L922.1 476.4 L929.3 475.7 L936.5 473.5 L936.5 521.4 Z" fill="#e6be00" fill-opacity=".78"/><path d="M77.8 521.4 L77.8 474.1 L85.0 471.6 L92.2 471.3 L99.5 474.9 L106.7 469.0 L113.9 469.0 L121.1 478.7 L128.3 469.3 L135.5 469.0 L142.8 469.8 L150.0 477.7 L157.2 469.2 L164.4 471.6 L171.6 479.2 L178.8 479.2 L186.1 469.0 L193.3 471.4 L200.5 476.3 L207.7 478.1 L214.9 477.6 L222.1 476.5 L229.4 469.9 L236.6 475.1 L243.8 477.5 L251.0 469.0 L258.2 469.7 L265.4 477.3 L272.6 469.0 L279.9 471.9 L287.1 469.8 L294.3 471.2 L301.5 469.0 L308.7 469.7 L315.9 469.1 L323.2 477.0 L330.4 470.9 L337.6 472.9 L344.8 470.3 L352.0 474.0 L359.2 469.0 L366.5 472.6 L373.7 476.1 L380.9 476.5 L388.1 477.7 L395.3 473.3 L402.5 478.7 L409.8 473.7 L417.0 477.6 L424.2 473.4 L431.4 473.3 L438.6 472.8 L445.8 469.0 L453.0 479.3 L460.3 469.1 L467.5 473.7 L474.7 472.5 L481.9 471.2 L489.1 469.1 L496.3 474.8 L503.6 474.3 L510.8 469.0 L518.0 478.4 L525.2 471.6 L532.4 471.6 L539.6 479.0 L546.9 471.9 L554.1 471.0 L561.3 469.0 L568.5 475.3 L575.7 469.0 L582.9 473.1 L590.2 473.4 L597.4 469.0 L604.6 479.0 L611.8 470.6 L619.0 471.7 L626.2 475.2 L633.4 469.0 L640.7 474.9 L647.9 473.6 L655.1 473.0 L662.3 470.0 L669.5 476.8 L676.7 474.1 L684.0 474.2 L691.2 472.6 L698.4 469.3 L705.6 475.8 L712.8 469.3 L720.0 474.4 L727.3 473.2 L734.5 476.0 L741.7 473.2 L748.9 469.0 L756.1 471.4 L763.3 469.7 L770.6 475.3 L777.8 475.5 L785.0 475.7 L792.2 472.2 L799.4 471.6 L806.6 469.8 L813.8 478.9 L821.1 470.5 L828.3 469.0 L835.5 472.7 L842.7 478.8 L849.9 475.7 L857.1 479.3 L864.4 477.0 L871.6 469.0 L878.8 471.9 L886.0 471.3 L893.2 469.7 L900.4 469.0 L907.7 471.9 L914.9 471.8 L922.1 471.7 L929.3 470.9 L936.5 472.1 L936.5 521.4 Z" fill="#ffee7c" fill-opacity=".78"/><path d="M77.8 521.4 L77.8 471.1 L85.0 476.8 L92.2 471.2 L99.5 473.8 L106.7 470.1 L113.9 478.1 L121.1 477.2 L128.3 478.9 L135.5 469.9 L142.8 469.0 L150.0 471.4 L157.2 474.9 L164.4 469.3 L171.6 469.8 L178.8 472.5 L186.1 476.2 L193.3 475.7 L200.5 474.2 L207.7 475.5 L214.9 474.1 L222.1 471.5 L229.4 469.0 L236.6 478.7 L243.8 472.4 L251.0 478.9 L258.2 477.9 L265.4 469.5 L272.6 472.3 L279.9 469.0 L287.1 473.9 L294.3 479.2 L301.5 474.6 L308.7 472.1 L315.9 469.0 L323.2 469.0 L330.4 473.6 L337.6 474.3 L344.8 478.1 L352.0 471.5 L359.2 476.8 L366.5 477.5 L373.7 479.2 L380.9 479.3 L388.1 471.0 L395.3 477.9 L402.5 469.0 L409.8 478.3 L417.0 469.0 L424.2 477.8 L431.4 479.1 L438.6 470.6 L445.8 476.4 L453.0 470.4 L460.3 477.1 L467.5 478.8 L474.7 469.9 L481.9 470.7 L489.1 469.0 L496.3 470.5 L503.6 478.3 L510.8 471.7 L518.0 470.7 L525.2 473.7 L532.4 469.0 L539.6 476.3 L546.9 469.0 L554.1 470.6 L561.3 479.2 L568.5 479.2 L575.7 471.4 L582.9 469.4 L590.2 478.4 L597.4 475.6 L604.6 470.5 L611.8 477.3 L619.0 469.0 L626.2 473.4 L633.4 478.6 L640.7 474.9 L647.9 472.3 L655.1 474.0 L662.3 471.1 L669.5 477.6 L676.7 469.6 L684.0 474.9 L691.2 471.5 L698.4 471.7 L705.6 474.3 L712.8 474.7 L720.0 469.8 L727.3 469.0 L734.5 469.8 L741.7 472.4 L748.9 475.8 L756.1 478.6 L763.3 469.0 L770.6 470.8 L777.8 469.3 L785.0 475.3 L792.2 472.0 L799.4 469.0 L806.6 469.2 L813.8 472.0 L821.1 475.6 L828.3 474.1 L835.5 469.0 L842.7 474.8 L849.9 471.0 L857.1 472.0 L864.4 469.0 L871.6 469.5 L878.8 475.9 L886.0 479.3 L893.2 476.2 L900.4 474.2 L907.7 472.2 L914.9 469.4 L922.1 469.0 L929.3 478.8 L936.5 469.2 L936.5 521.4 Z" fill="#4fd5e0" fill-opacity=".78"/><path d="M77.8 521.4 L77.8 469.5 L85.0 469.0 L92.2 472.4 L99.5 476.0 L106.7 469.0 L113.9 469.5 L121.1 471.0 L128.3 469.0 L135.5 475.1 L142.8 478.3 L150.0 472.6 L157.2 469.6 L164.4 476.9 L171.6 470.2 L178.8 469.0 L186.1 476.5 L193.3 472.0 L200.5 471.1 L207.7 473.7 L214.9 476.8 L222.1 476.3 L229.4 470.2 L236.6 469.7 L243.8 473.8 L251.0 478.3 L258.2 469.5 L265.4 469.9 L272.6 476.5 L279.9 472.3 L287.1 469.0 L294.3 469.0 L301.5 473.0 L308.7 473.5 L315.9 472.2 L323.2 477.1 L330.4 477.0 L337.6 477.2 L344.8 470.8 L352.0 474.9 L359.2 472.5 L366.5 474.5 L373.7 473.1 L380.9 477.5 L388.1 478.8 L395.3 469.0 L402.5 474.8 L409.8 478.1 L417.0 471.6 L424.2 469.8 L431.4 477.5 L438.6 472.1 L445.8 475.2 L453.0 473.0 L460.3 479.1 L467.5 479.0 L474.7 469.0 L481.9 469.0 L489.1 473.4 L496.3 472.4 L503.6 476.2 L510.8 469.9 L518.0 474.2 L525.2 469.0 L532.4 470.0 L539.6 469.4 L546.9 469.0 L554.1 476.3 L561.3 478.9 L568.5 476.9 L575.7 477.2 L582.9 478.3 L590.2 478.7 L597.4 472.6 L604.6 469.0 L611.8 473.8 L619.0 469.0 L626.2 469.0 L633.4 478.6 L640.7 472.1 L647.9 474.5 L655.1 477.9 L662.3 469.0 L669.5 476.2 L676.7 472.5 L684.0 471.5 L691.2 469.0 L698.4 471.2 L705.6 474.6 L712.8 473.9 L720.0 477.4 L727.3 469.0 L734.5 469.0 L741.7 476.7 L748.9 478.9 L756.1 476.2 L763.3 475.1 L770.6 469.0 L777.8 469.0 L785.0 469.1 L792.2 478.8 L799.4 469.8 L806.6 470.7 L813.8 471.5 L821.1 469.0 L828.3 478.7 L835.5 477.6 L842.7 470.2 L849.9 469.0 L857.1 471.1 L864.4 475.7 L871.6 472.1 L878.8 470.1 L886.0 478.1 L893.2 475.4 L900.4 476.2 L907.7 477.8 L914.9 473.5 L922.1 477.3 L929.3 476.5 L936.5 477.6 L936.5 521.4 Z" fill="#7c38a1" fill-opacity=".78"/><path d="M77.8 521.4 L77.8 471.1 L85.0 479.2 L92.2 470.6 L99.5 477.0 L106.7 478.9 L113.9 469.0 L121.1 476.7 L128.3 469.0 L135.5 469.0 L142.8 469.0 L150.0 477.7 L157.2 473.9 L164.4 478.2 L171.6 469.0 L178.8 469.1 L186.1 471.7 L193.3 473.8 L200.5 475.2 L207.7 469.3 L214.9 473.5 L222.1 471.7 L229.4 477.6 L236.6 476.7 L243.8 478.7 L251.0 470.7 L258.2 472.6 L265.4 477.6 L272.6 469.0 L279.9 476.1 L287.1 474.3 L294.3 477.5 L301.5 476.1 L308.7 469.1 L315.9 475.3 L323.2 477.3 L330.4 473.4 L337.6 475.5 L344.8 469.0 L352.0 478.0 L359.2 469.0 L366.5 478.7 L373.7 469.0 L380.9 471.2 L388.1 476.8 L395.3 473.5 L402.5 475.9 L409.8 476.2 L417.0 476.9 L424.2 474.9 L431.4 469.0 L438.6 469.0 L445.8 469.0 L453.0 478.2 L460.3 475.8 L467.5 469.0 L474.7 478.7 L481.9 470.5 L489.1 475.8 L496.3 469.0 L503.6 479.2 L510.8 469.5 L518.0 475.2 L525.2 477.7 L532.4 479.3 L539.6 469.2 L546.9 472.9 L554.1 477.1 L561.3 474.1 L568.5 469.0 L575.7 476.7 L582.9 472.4 L590.2 477.7 L597.4 477.2 L604.6 470.0 L611.8 470.7 L619.0 477.0 L626.2 478.4 L633.4 478.3 L640.7 471.9 L647.9 473.3 L655.1 476.0 L662.3 476.8 L669.5 471.9 L676.7 470.7 L684.0 469.5 L691.2 472.2 L698.4 476.9 L705.6 478.6 L712.8 470.4 L720.0 474.4 L727.3 470.6 L734.5 478.7 L741.7 469.5 L748.9 475.3 L756.1 469.1 L763.3 469.0 L770.6 473.3 L777.8 479.2 L785.0 469.0 L792.2 473.5 L799.4 469.0 L806.6 476.1 L813.8 477.1 L821.1 469.2 L828.3 474.9 L835.5 477.4 L842.7 474.8 L849.9 472.1 L857.1 479.3 L864.4 473.0 L871.6 473.9 L878.8 473.1 L886.0 477.9 L893.2 470.6 L900.4 469.4 L907.7 469.0 L914.9 475.4 L922.1 470.7 L929.3 474.7 L936.5 470.2 L936.5 521.4 Z" fill="#4556d7" fill-opacity=".78"/><path d="M77.8 521.4 L77.8 478.6 L85.0 469.0 L92.2 469.0 L99.5 473.3 L106.7 473.1 L113.9 472.9 L121.1 472.8 L128.3 479.1 L135.5 469.0 L142.8 476.6 L150.0 477.1 L157.2 478.1 L164.4 476.3 L171.6 469.4 L178.8 479.0 L186.1 478.2 L193.3 470.8 L200.5 477.0 L207.7 479.1 L214.9 472.0 L222.1 472.3 L229.4 473.0 L236.6 470.8 L243.8 478.1 L251.0 469.0 L258.2 470.6 L265.4 478.8 L272.6 477.9 L279.9 473.3 L287.1 473.3 L294.3 476.0 L301.5 477.9 L308.7 474.4 L315.9 477.7 L323.2 472.1 L330.4 469.0 L337.6 477.6 L344.8 472.4 L352.0 470.3 L359.2 477.4 L366.5 469.3 L373.7 469.0 L380.9 474.6 L388.1 474.2 L395.3 469.1 L402.5 472.9 L409.8 474.5 L417.0 469.0 L424.2 469.9 L431.4 475.2 L438.6 476.4 L445.8 475.3 L453.0 474.0 L460.3 469.0 L467.5 469.5 L474.7 469.0 L481.9 469.4 L489.1 469.0 L496.3 478.7 L503.6 473.0 L510.8 469.0 L518.0 469.0 L525.2 476.3 L532.4 474.2 L539.6 471.6 L546.9 474.9 L554.1 472.9 L561.3 478.5 L568.5 474.1 L575.7 473.2 L582.9 479.1 L590.2 477.7 L597.4 469.0 L604.6 469.9 L611.8 469.0 L619.0 471.6 L626.2 469.5 L633.4 469.0 L640.7 469.0 L647.9 478.9 L655.1 471.5 L662.3 476.1 L669.5 471.1 L676.7 476.0 L684.0 472.7 L691.2 469.0 L698.4 471.8 L705.6 476.3 L712.8 473.0 L720.0 474.1 L727.3 469.0 L734.5 475.9 L741.7 475.6 L748.9 471.5 L756.1 477.9 L763.3 472.1 L770.6 469.0 L777.8 473.1 L785.0 476.1 L792.2 473.7 L799.4 472.8 L806.6 477.6 L813.8 477.9 L821.1 477.8 L828.3 475.8 L835.5 474.4 L842.7 475.8 L849.9 476.4 L857.1 478.3 L864.4 472.7 L871.6 469.1 L878.8 471.9 L886.0 472.4 L893.2 471.4 L900.4 476.9 L907.7 470.7 L914.9 473.7 L922.1 472.7 L929.3 471.9 L936.5 473.6 L936.5 521.4 Z" fill="#debbf3" fill-opacity=".78"/><path d="M77.8 521.4 L77.8 475.6 L85.0 476.4 L92.2 476.7 L99.5 473.1 L106.7 474.7 L113.9 472.2 L121.1 479.2 L128.3 475.1 L135.5 469.0 L142.8 476.5 L150.0 472.6 L157.2 473.4 L164.4 475.9 L171.6 469.0 L178.8 475.8 L186.1 469.9 L193.3 477.4 L200.5 478.5 L207.7 469.0 L214.9 474.0 L222.1 478.6 L229.4 474.6 L236.6 474.0 L243.8 470.4 L251.0 478.0 L258.2 476.6 L265.4 469.0 L272.6 470.3 L279.9 477.5 L287.1 475.3 L294.3 475.1 L301.5 471.1 L308.7 471.8 L315.9 469.0 L323.2 469.3 L330.4 473.0 L337.6 470.3 L344.8 470.3 L352.0 470.1 L359.2 473.6 L366.5 469.8 L373.7 470.7 L380.9 469.0 L388.1 477.8 L395.3 469.0 L402.5 479.3 L409.8 470.0 L417.0 472.2 L424.2 473.3 L431.4 469.0 L438.6 472.4 L445.8 474.3 L453.0 469.8 L460.3 469.0 L467.5 472.0 L474.7 474.7 L481.9 473.8 L489.1 473.8 L496.3 470.5 L503.6 475.8 L510.8 474.6 L518.0 472.6 L525.2 474.7 L532.4 475.4 L539.6 469.8 L546.9 469.0 L554.1 473.3 L561.3 473.9 L568.5 477.1 L575.7 475.7 L582.9 477.6 L590.2 472.3 L597.4 472.3 L604.6 478.3 L611.8 469.0 L619.0 475.4 L626.2 469.1 L633.4 469.1 L640.7 469.0 L647.9 476.9 L655.1 474.2 L662.3 469.0 L669.5 479.2 L676.7 478.8 L684.0 472.5 L691.2 473.3 L698.4 469.0 L705.6 469.9 L712.8 472.8 L720.0 469.0 L727.3 473.0 L734.5 473.1 L741.7 471.0 L748.9 474.6 L756.1 475.0 L763.3 472.1 L770.6 475.1 L777.8 469.0 L785.0 471.1 L792.2 473.0 L799.4 478.2 L806.6 474.8 L813.8 474.5 L821.1 472.5 L828.3 472.4 L835.5 469.0 L842.7 469.0 L849.9 473.4 L857.1 474.0 L864.4 471.7 L871.6 469.0 L878.8 475.2 L886.0 472.9 L893.2 469.4 L900.4 477.3 L907.7 475.5 L914.9 469.0 L922.1 469.3 L929.3 473.1 L936.5 478.0 L936.5 521.4 Z" fill="#f5d30f" fill-opacity=".78"/><path d="M77.8 521.4 L77.8 469.0 L85.0 470.9 L92.2 469.3 L99.5 469.0 L106.7 469.0 L113.9 474.2 L121.1 477.5 L128.3 475.8 L135.5 473.1 L142.8 473.2 L150.0 477.1 L157.2 477.1 L164.4 471.7 L171.6 472.0 L178.8 475.1 L186.1 469.0 L193.3 471.6 L200.5 478.8 L207.7 474.3 L214.9 469.8 L222.1 475.6 L229.4 470.9 L236.6 479.3 L243.8 475.6 L251.0 469.1 L258.2 472.2 L265.4 471.2 L272.6 477.0 L279.9 473.3 L287.1 472.6 L294.3 476.1 L301.5 471.5 L308.7 472.9 L315.9 469.0 L323.2 472.4 L330.4 474.3 L337.6 477.9 L344.8 477.5 L352.0 470.1 L359.2 478.1 L366.5 478.1 L373.7 477.3 L380.9 473.0 L388.1 469.3 L395.3 471.9 L402.5 469.5 L409.8 478.6 L417.0 479.2 L424.2 470.0 L431.4 475.4 L438.6 470.6 L445.8 475.0 L453.0 477.3 L460.3 476.1 L467.5 478.2 L474.7 469.0 L481.9 472.3 L489.1 475.1 L496.3 473.9 L503.6 474.7 L510.8 478.7 L518.0 469.0 L525.2 472.3 L532.4 469.0 L539.6 474.0 L546.9 471.8 L554.1 476.3 L561.3 478.8 L568.5 469.0 L575.7 469.0 L582.9 475.5 L590.2 469.0 L597.4 469.4 L604.6 475.7 L611.8 472.0 L619.0 469.0 L626.2 473.3 L633.4 469.0 L640.7 476.4 L647.9 474.6 L655.1 470.6 L662.3 476.7 L669.5 475.6 L676.7 469.0 L684.0 473.5 L691.2 469.7 L698.4 476.4 L705.6 477.2 L712.8 475.0 L720.0 477.1 L727.3 469.0 L734.5 475.8 L741.7 472.5 L748.9 478.0 L756.1 472.9 L763.3 474.7 L770.6 474.4 L777.8 478.6 L785.0 477.9 L792.2 469.3 L799.4 475.1 L806.6 476.4 L813.8 477.0 L821.1 475.9 L828.3 476.5 L835.5 478.9 L842.7 471.3 L849.9 475.2 L857.1 477.5 L864.4 470.7 L871.6 478.2 L878.8 476.1 L886.0 469.2 L893.2 477.8 L900.4 474.0 L907.7 469.2 L914.9 469.5 L922.1 477.4 L929.3 475.1 L936.5 470.5 L936.5 521.4 Z" fill="#4fd5e0" fill-opacity=".78"/><path d="M77.8 521.4 L77.8 474.8 L85.0 469.0 L92.2 476.8 L99.5 469.0 L106.7 473.2 L113.9 476.6 L121.1 473.8 L128.3 477.8 L135.5 470.7 L142.8 476.2 L150.0 469.0 L157.2 472.2 L164.4 474.9 L171.6 476.4 L178.8 471.9 L186.1 476.8 L193.3 469.0 L200.5 477.9 L207.7 473.1 L214.9 472.7 L222.1 476.1 L229.4 469.9 L236.6 474.7 L243.8 471.3 L251.0 472.4 L258.2 475.6 L265.4 474.6 L272.6 478.3 L279.9 477.2 L287.1 469.0 L294.3 475.4 L301.5 471.3 L308.7 478.0 L315.9 472.5 L323.2 475.0 L330.4 473.3 L337.6 475.7 L344.8 478.6 L352.0 475.6 L359.2 476.6 L366.5 477.8 L373.7 470.6 L380.9 475.9 L388.1 474.4 L395.3 469.0 L402.5 469.9 L409.8 469.0 L417.0 469.0 L424.2 477.8 L431.4 476.0 L438.6 479.0 L445.8 471.1 L453.0 471.3 L460.3 475.1 L467.5 474.3 L474.7 471.3 L481.9 470.8 L489.1 476.3 L496.3 469.0 L503.6 475.1 L510.8 471.7 L518.0 477.1 L525.2 478.0 L532.4 469.0 L539.6 470.4 L546.9 470.7 L554.1 478.9 L561.3 478.9 L568.5 477.4 L575.7 476.9 L582.9 475.7 L590.2 474.7 L597.4 478.9 L604.6 475.6 L611.8 471.6 L619.0 477.2 L626.2 469.1 L633.4 472.4 L640.7 470.6 L647.9 476.3 L655.1 474.1 L662.3 471.0 L669.5 475.1 L676.7 479.4 L684.0 469.2 L691.2 469.9 L698.4 475.9 L705.6 478.8 L712.8 469.0 L720.0 472.0 L727.3 478.8 L734.5 476.4 L741.7 478.0 L748.9 469.7 L756.1 476.8 L763.3 469.0 L770.6 470.2 L777.8 478.3 L785.0 470.9 L792.2 474.6 L799.4 470.2 L806.6 469.3 L813.8 475.9 L821.1 478.3 L828.3 469.0 L835.5 474.2 L842.7 469.0 L849.9 470.9 L857.1 470.3 L864.4 469.2 L871.6 471.7 L878.8 473.8 L886.0 478.7 L893.2 470.8 L900.4 474.1 L907.7 473.1 L914.9 469.0 L922.1 477.8 L929.3 470.1 L936.5 478.8 L936.5 521.4 Z" fill="#c9b9f3" fill-opacity=".78"/><path d="M77.8 521.4 L77.8 470.8 L85.0 469.5 L92.2 476.2 L99.5 472.7 L106.7 469.0 L113.9 471.6 L121.1 472.7 L128.3 476.3 L135.5 478.6 L142.8 475.0 L150.0 474.3 L157.2 476.9 L164.4 475.6 L171.6 477.7 L178.8 470.7 L186.1 471.2 L193.3 476.5 L200.5 476.4 L207.7 473.1 L214.9 473.9 L222.1 469.0 L229.4 475.1 L236.6 475.7 L243.8 469.0 L251.0 477.6 L258.2 472.5 L265.4 475.3 L272.6 469.4 L279.9 472.7 L287.1 470.1 L294.3 477.3 L301.5 471.2 L308.7 472.1 L315.9 473.7 L323.2 470.0 L330.4 469.2 L337.6 478.0 L344.8 475.8 L352.0 475.0 L359.2 476.8 L366.5 478.6 L373.7 475.9 L380.9 477.0 L388.1 470.8 L395.3 473.9 L402.5 478.0 L409.8 475.4 L417.0 473.6 L424.2 474.9 L431.4 477.3 L438.6 478.5 L445.8 479.2 L453.0 469.0 L460.3 470.2 L467.5 478.3 L474.7 470.6 L481.9 469.0 L489.1 472.5 L496.3 478.0 L503.6 473.4 L510.8 474.1 L518.0 477.0 L525.2 472.7 L532.4 479.3 L539.6 469.0 L546.9 471.5 L554.1 471.7 L561.3 469.0 L568.5 471.4 L575.7 476.3 L582.9 476.4 L590.2 477.7 L597.4 479.0 L604.6 469.9 L611.8 469.1 L619.0 475.7 L626.2 477.1 L633.4 471.6 L640.7 469.0 L647.9 469.0 L655.1 477.3 L662.3 469.8 L669.5 469.2 L676.7 470.3 L684.0 475.4 L691.2 477.1 L698.4 469.3 L705.6 475.5 L712.8 474.9 L720.0 472.6 L727.3 474.9 L734.5 469.2 L741.7 476.4 L748.9 478.9 L756.1 472.4 L763.3 471.7 L770.6 469.4 L777.8 470.8 L785.0 469.0 L792.2 469.0 L799.4 473.3 L806.6 473.3 L813.8 477.4 L821.1 475.7 L828.3 472.3 L835.5 478.4 L842.7 471.0 L849.9 477.4 L857.1 474.0 L864.4 469.0 L871.6 478.3 L878.8 478.9 L886.0 474.0 L893.2 477.0 L900.4 470.5 L907.7 479.3 L914.9 469.1 L922.1 469.0 L929.3 469.8 L936.5 474.2 L936.5 521.4 Z" fill="#4fd5e0" fill-opacity=".78"/><path d="M77.8 521.4 L77.8 475.9 L85.0 471.3 L92.2 473.1 L99.5 474.2 L106.7 475.2 L113.9 474.0 L121.1 471.2 L128.3 469.3 L135.5 469.0 L142.8 477.4 L150.0 475.8 L157.2 474.0 L164.4 472.5 L171.6 475.1 L178.8 477.0 L186.1 478.3 L193.3 475.4 L200.5 473.7 L207.7 469.0 L214.9 469.0 L222.1 469.0 L229.4 469.0 L236.6 469.0 L243.8 471.8 L251.0 469.5 L258.2 478.6 L265.4 471.1 L272.6 471.9 L279.9 475.7 L287.1 472.4 L294.3 469.0 L301.5 473.5 L308.7 471.5 L315.9 475.7 L323.2 475.2 L330.4 469.0 L337.6 479.0 L344.8 477.1 L352.0 471.1 L359.2 473.9 L366.5 478.3 L373.7 471.3 L380.9 474.8 L388.1 472.3 L395.3 474.3 L402.5 472.9 L409.8 472.5 L417.0 474.5 L424.2 478.0 L431.4 477.2 L438.6 469.0 L445.8 472.7 L453.0 478.0 L460.3 469.0 L467.5 476.3 L474.7 478.2 L481.9 472.9 L489.1 476.3 L496.3 473.4 L503.6 472.6 L510.8 476.6 L518.0 472.4 L525.2 478.0 L532.4 473.1 L539.6 472.2 L546.9 478.4 L554.1 474.4 L561.3 478.5 L568.5 474.0 L575.7 469.0 L582.9 472.6 L590.2 470.6 L597.4 470.1 L604.6 478.0 L611.8 469.0 L619.0 470.6 L626.2 478.1 L633.4 469.2 L640.7 474.6 L647.9 477.3 L655.1 469.0 L662.3 472.5 L669.5 469.9 L676.7 477.7 L684.0 469.9 L691.2 478.7 L698.4 476.5 L705.6 474.8 L712.8 479.2 L720.0 472.1 L727.3 476.8 L734.5 475.7 L741.7 470.7 L748.9 474.2 L756.1 469.0 L763.3 471.8 L770.6 469.0 L777.8 472.5 L785.0 469.0 L792.2 469.0 L799.4 477.3 L806.6 470.3 L813.8 475.2 L821.1 470.0 L828.3 471.1 L835.5 469.3 L842.7 477.9 L849.9 474.8 L857.1 470.4 L864.4 469.0 L871.6 470.6 L878.8 478.8 L886.0 472.0 L893.2 478.1 L900.4 472.7 L907.7 469.6 L914.9 478.0 L922.1 469.0 L929.3 471.1 L936.5 476.3 L936.5 521.4 Z" fill="#debbf3" fill-opacity=".78"/><path d="M77.8 521.4 L77.8 470.3 L85.0 472.5 L92.2 477.4 L99.5 474.0 L106.7 469.8 L113.9 469.5 L121.1 469.8 L128.3 476.9 L135.5 470.2 L142.8 473.7 L150.0 471.0 L157.2 475.3 L164.4 471.9 L171.6 470.0 L178.8 477.9 L186.1 473.5 L193.3 475.4 L200.5 477.0 L207.7 479.0 L214.9 469.4 L222.1 471.5 L229.4 470.0 L236.6 473.1 L243.8 477.9 L251.0 476.9 L258.2 469.5 L265.4 470.2 L272.6 477.1 L279.9 475.2 L287.1 472.0 L294.3 472.8 L301.5 470.1 L308.7 477.5 L315.9 472.0 L323.2 477.9 L330.4 474.4 L337.6 469.6 L344.8 471.4 L352.0 470.5 L359.2 478.2 L366.5 474.1 L373.7 469.5 L380.9 470.1 L388.1 471.7 L395.3 472.7 L402.5 474.0 L409.8 471.9 L417.0 471.6 L424.2 469.4 L431.4 474.0 L438.6 471.4 L445.8 469.5 L453.0 472.7 L460.3 479.6 L467.5 469.5 L474.7 470.0 L481.9 475.1 L489.1 470.9 L496.3 470.9 L503.6 473.1 L510.8 470.8 L518.0 473.9 L525.2 473.4 L532.4 479.2 L539.6 479.7 L546.9 469.5 L554.1 473.8 L561.3 476.5 L568.5 477.9 L575.7 476.5 L582.9 474.7 L590.2 474.7 L597.4 471.7 L604.6 471.0 L611.8 476.8 L619.0 477.9 L626.2 478.9 L633.4 475.3 L640.7 471.2 L647.9 476.4 L655.1 476.0 L662.3 473.2 L669.5 474.7 L676.7 471.6 L684.0 473.7 L691.2 472.1 L698.4 469.6 L705.6 471.5 L712.8 471.3 L720.0 479.6 L727.3 472.9 L734.5 471.7 L741.7 470.7 L748.9 470.6 L756.1 471.6 L763.3 469.9 L770.6 469.4 L777.8 477.9 L785.0 472.6 L792.2 472.5 L799.4 473.9 L806.6 471.1 L813.8 470.1 L821.1 469.6 L828.3 471.1 L835.5 471.2 L842.7 475.9 L849.9 473.7 L857.1 478.9 L864.4 471.5 L871.6 478.6 L878.8 474.1 L886.0 469.7 L893.2 470.2 L900.4 474.0 L907.7 479.6 L914.9 471.6 L922.1 476.5 L929.3 472.3 L936.5 477.8 L936.5 521.4 Z" fill="#e27b4e"/><path d="M77.8 424.7 L85.0 429.4 L92.2 428.1 L99.5 427.5 L106.7 428.3 L113.9 418.2 L121.1 427.0 L128.3 415.1 L135.5 427.5 L142.8 415.0 L150.0 427.0 L157.2 423.1 L164.4 419.8 L171.6 424.1 L178.8 418.0 L186.1 422.5 L193.3 423.1 L200.5 424.7 L207.7 423.9 L214.9 426.2 L222.1 428.6 L229.4 429.4 L236.6 421.6 L243.8 426.6 L251.0 417.2 L258.2 427.6 L265.4 429.0 L272.6 428.3 L279.9 422.2 L287.1 420.1 L294.3 419.3 L301.5 423.8 L308.7 424.1 L315.9 416.4 L323.2 422.1 L330.4 412.1 L337.6 423.2 L344.8 414.3 L352.0 429.4 L359.2 421.0 L366.5 423.9 L373.7 423.7 L380.9 425.1 L388.1 427.6 L395.3 424.8 L402.5 428.8 L409.8 423.8 L417.0 428.6 L424.2 416.7 L431.4 429.4 L438.6 426.6 L445.8 420.6 L453.0 422.7 L460.3 420.2 L467.5 415.5 L474.7 420.3 L481.9 423.7 L489.1 420.6 L496.3 426.6 L503.6 421.2 L510.8 422.4 L518.0 429.0 L525.2 427.2 L532.4 429.4 L539.6 423.0 L546.9 418.6 L554.1 425.7 L561.3 422.5 L568.5 428.4 L575.7 418.9 L582.9 426.9 L590.2 418.8 L597.4 423.3 L604.6 425.6 L611.8 418.8 L619.0 420.0 L626.2 421.8 L633.4 428.1 L640.7 414.6 L647.9 429.4 L655.1 418.3 L662.3 421.3 L669.5 424.8 L676.7 429.4 L684.0 429.4 L691.2 421.3 L698.4 419.9 L705.6 429.3 L712.8 419.9 L720.0 429.4 L727.3 426.9 L734.5 429.2 L741.7 418.9 L748.9 420.9 L756.1 427.8 L763.3 429.4 L770.6 426.5 L777.8 426.4 L785.0 429.4 L792.2 428.3 L799.4 427.3 L806.6 419.6 L813.8 420.5 L821.1 429.4 L828.3 429.4 L835.5 427.4 L842.7 426.4 L849.9 429.4 L857.1 423.3 L864.4 424.1 L871.6 416.7 L878.8 418.6 L886.0 425.2 L893.2 416.4 L900.4 425.4 L907.7 429.2 L914.9 428.6 L922.1 415.3 L929.3 421.4 L936.5 427.4" fill="none" stroke="#4556d7" stroke-width="1.4" stroke-linejoin="miter" stroke-miterlimit="3" stroke-linecap="butt" stroke-opacity="1"/><path d="M77.8 417.5 L85.0 422.9 L92.2 420.0 L99.5 417.8 L106.7 415.4 L113.9 420.5 L121.1 420.8 L128.3 415.9 L135.5 421.0 L142.8 422.1 L150.0 421.2 L157.2 419.3 L164.4 421.5 L171.6 419.2 L178.8 420.4 L186.1 418.8 L193.3 420.6 L200.5 422.7 L207.7 427.2 L214.9 421.0 L222.1 421.0 L229.4 422.4 L236.6 418.8 L243.8 420.8 L251.0 416.7 L258.2 423.3 L265.4 417.0 L272.6 422.5 L279.9 423.6 L287.1 424.8 L294.3 421.4 L301.5 425.9 L308.7 417.7 L315.9 421.9 L323.2 418.7 L330.4 423.8 L337.6 421.1 L344.8 422.7 L352.0 422.7 L359.2 426.5 L366.5 422.7 L373.7 428.4 L380.9 425.7 L388.1 426.6 L395.3 426.0 L402.5 417.9 L409.8 423.7 L417.0 420.2 L424.2 426.5 L431.4 423.6 L438.6 423.2 L445.8 420.4 L453.0 421.7 L460.3 420.5 L467.5 422.2 L474.7 415.4 L481.9 417.4 L489.1 424.6 L496.3 420.6 L503.6 419.9 L510.8 415.8 L518.0 420.5 L525.2 422.0 L532.4 420.9 L539.6 416.8 L546.9 421.2 L554.1 418.1 L561.3 418.2 L568.5 425.7 L575.7 420.0 L582.9 416.9 L590.2 424.6 L597.4 421.0 L604.6 429.4 L611.8 423.0 L619.0 423.8 L626.2 423.9 L633.4 423.8 L640.7 424.5 L647.9 419.1 L655.1 423.7 L662.3 421.3 L669.5 419.3 L676.7 427.0 L684.0 427.4 L691.2 422.2 L698.4 423.3 L705.6 426.5 L712.8 419.4 L720.0 422.8 L727.3 426.5 L734.5 423.2 L741.7 422.3 L748.9 423.0 L756.1 423.1 L763.3 418.0 L770.6 423.2 L777.8 422.3 L785.0 422.9 L792.2 419.6 L799.4 421.4 L806.6 420.7 L813.8 417.7 L821.1 418.6 L828.3 425.0 L835.5 427.5 L842.7 425.3 L849.9 423.9 L857.1 418.4 L864.4 418.1 L871.6 416.3 L878.8 422.6 L886.0 422.0 L893.2 420.0 L900.4 424.0 L907.7 414.7 L914.9 418.6 L922.1 417.8 L929.3 424.1 L936.5 421.4" fill="none" stroke="#4fd5e0" stroke-width="1.4" stroke-linejoin="miter" stroke-miterlimit="3" stroke-linecap="butt" stroke-opacity="1"/><path d="M77.8 429.4 L85.0 427.6 L92.2 429.4 L99.5 425.0 L106.7 426.9 L113.9 410.6 L121.1 429.4 L128.3 419.5 L135.5 423.0 L142.8 426.5 L150.0 425.6 L157.2 429.4 L164.4 428.8 L171.6 410.8 L178.8 418.1 L186.1 423.5 L193.3 420.1 L200.5 426.3 L207.7 412.9 L214.9 419.3 L222.1 429.4 L229.4 416.8 L236.6 427.5 L243.8 429.3 L251.0 411.9 L258.2 413.7 L265.4 429.4 L272.6 423.8 L279.9 419.8 L287.1 420.4 L294.3 429.4 L301.5 429.4 L308.7 419.6 L315.9 425.0 L323.2 426.2 L330.4 425.2 L337.6 427.5 L344.8 429.4 L352.0 429.4 L359.2 419.6 L366.5 421.5 L373.7 425.6 L380.9 429.4 L388.1 429.4 L395.3 423.4 L402.5 426.5 L409.8 426.5 L417.0 428.9 L424.2 429.2 L431.4 429.4 L438.6 421.6 L445.8 420.3 L453.0 420.9 L460.3 422.7 L467.5 423.4 L474.7 423.0 L481.9 429.4 L489.1 429.4 L496.3 429.4 L503.6 429.4 L510.8 429.4 L518.0 418.9 L525.2 429.4 L532.4 422.6 L539.6 429.4 L546.9 418.1 L554.1 423.5 L561.3 420.4 L568.5 427.5 L575.7 418.9 L582.9 426.7 L590.2 416.9 L597.4 427.4 L604.6 428.9 L611.8 429.3 L619.0 415.9 L626.2 416.7 L633.4 422.6 L640.7 413.8 L647.9 418.1 L655.1 420.4 L662.3 415.9 L669.5 419.7 L676.7 429.4 L684.0 418.8 L691.2 428.0 L698.4 411.9 L705.6 414.2 L712.8 412.5 L720.0 420.0 L727.3 412.8 L734.5 421.2 L741.7 415.8 L748.9 422.9 L756.1 409.6 L763.3 411.6 L770.6 426.1 L777.8 426.2 L785.0 414.2 L792.2 417.4 L799.4 417.0 L806.6 417.7 L813.8 413.4 L821.1 428.5 L828.3 414.3 L835.5 420.3 L842.7 415.2 L849.9 424.0 L857.1 429.4 L864.4 425.7 L871.6 424.3 L878.8 429.4 L886.0 418.5 L893.2 428.0 L900.4 429.4 L907.7 425.7 L914.9 417.9 L922.1 422.1 L929.3 421.4 L936.5 429.4" fill="none" stroke="#f5d30f" stroke-width="1.4" stroke-linejoin="miter" stroke-miterlimit="3" stroke-linecap="butt" stroke-opacity="1"/><path d="M77.8 409.8 L85.0 408.9 L92.2 414.4 L99.5 411.8 L106.7 413.7 L113.9 413.2 L121.1 416.0 L128.3 407.5 L135.5 408.6 L142.8 415.8 L150.0 415.1 L157.2 413.3 L164.4 408.7 L171.6 409.9 L178.8 412.8 L186.1 408.6 L193.3 412.9 L200.5 415.6 L207.7 411.5 L214.9 411.7 L222.1 407.5 L229.4 410.8 L236.6 413.1 L243.8 410.8 L251.0 409.0 L258.2 416.9 L265.4 416.9 L272.6 407.5 L279.9 411.6 L287.1 418.2 L294.3 410.0 L301.5 415.3 L308.7 414.0 L315.9 412.6 L323.2 407.7 L330.4 407.5 L337.6 407.5 L344.8 407.5 L352.0 416.0 L359.2 407.5 L366.5 412.5 L373.7 412.7 L380.9 415.4 L388.1 414.6 L395.3 417.6 L402.5 414.7 L409.8 407.5 L417.0 415.4 L424.2 414.7 L431.4 413.0 L438.6 417.5 L445.8 416.2 L453.0 415.1 L460.3 408.7 L467.5 409.8 L474.7 409.7 L481.9 418.6 L489.1 413.1 L496.3 410.4 L503.6 414.4 L510.8 407.5 L518.0 415.3 L525.2 415.2 L532.4 416.8 L539.6 409.0 L546.9 407.5 L554.1 416.1 L561.3 414.5 L568.5 411.3 L575.7 410.0 L582.9 418.2 L590.2 408.6 L597.4 411.2 L604.6 413.6 L611.8 407.5 L619.0 413.1 L626.2 412.4 L633.4 407.9 L640.7 412.4 L647.9 407.5 L655.1 416.1 L662.3 417.2 L669.5 411.1 L676.7 413.3 L684.0 413.6 L691.2 411.1 L698.4 409.3 L705.6 413.1 L712.8 413.7 L720.0 407.5 L727.3 407.5 L734.5 407.5 L741.7 410.4 L748.9 410.6 L756.1 418.9 L763.3 408.8 L770.6 417.8 L777.8 420.5 L785.0 408.1 L792.2 414.2 L799.4 417.1 L806.6 412.5 L813.8 411.8 L821.1 418.1 L828.3 417.7 L835.5 412.1 L842.7 413.6 L849.9 422.4 L857.1 419.2 L864.4 416.3 L871.6 414.1 L878.8 414.1 L886.0 415.4 L893.2 414.2 L900.4 419.1 L907.7 424.0 L914.9 413.9 L922.1 416.9 L929.3 414.0 L936.5 411.5" fill="none" stroke="#7c8cf4" stroke-width="1.4" stroke-linejoin="miter" stroke-miterlimit="3" stroke-linecap="butt" stroke-opacity="1"/><path d="M77.8 413.8 L85.0 416.6 L92.2 416.4 L99.5 407.5 L106.7 410.8 L113.9 417.1 L121.1 416.2 L128.3 409.5 L135.5 414.7 L142.8 411.2 L150.0 420.4 L157.2 411.5 L164.4 407.8 L171.6 407.5 L178.8 407.5 L186.1 417.9 L193.3 408.4 L200.5 411.1 L207.7 417.2 L214.9 413.5 L222.1 416.5 L229.4 421.1 L236.6 408.1 L243.8 414.3 L251.0 422.5 L258.2 411.5 L265.4 407.5 L272.6 407.9 L279.9 407.5 L287.1 422.3 L294.3 414.3 L301.5 420.1 L308.7 409.9 L315.9 407.5 L323.2 413.8 L330.4 413.6 L337.6 407.5 L344.8 421.5 L352.0 412.5 L359.2 423.5 L366.5 407.5 L373.7 421.2 L380.9 410.3 L388.1 416.7 L395.3 407.5 L402.5 410.3 L409.8 419.0 L417.0 414.2 L424.2 412.5 L431.4 421.3 L438.6 413.9 L445.8 410.5 L453.0 422.2 L460.3 421.1 L467.5 414.9 L474.7 408.3 L481.9 410.9 L489.1 413.1 L496.3 407.5 L503.6 421.6 L510.8 407.5 L518.0 417.8 L525.2 407.9 L532.4 408.5 L539.6 422.7 L546.9 407.5 L554.1 423.1 L561.3 407.9 L568.5 413.4 L575.7 411.2 L582.9 415.8 L590.2 422.3 L597.4 419.4 L604.6 407.5 L611.8 407.5 L619.0 413.7 L626.2 410.5 L633.4 407.5 L640.7 409.2 L647.9 409.0 L655.1 412.3 L662.3 408.2 L669.5 423.8 L676.7 418.7 L684.0 424.0 L691.2 422.1 L698.4 407.5 L705.6 419.1 L712.8 416.9 L720.0 419.3 L727.3 409.1 L734.5 418.7 L741.7 407.5 L748.9 416.6 L756.1 414.3 L763.3 416.3 L770.6 407.5 L777.8 418.2 L785.0 419.1 L792.2 409.5 L799.4 412.3 L806.6 410.2 L813.8 407.5 L821.1 407.5 L828.3 407.5 L835.5 417.4 L842.7 407.5 L849.9 407.5 L857.1 407.5 L864.4 408.8 L871.6 417.6 L878.8 417.7 L886.0 417.2 L893.2 410.3 L900.4 407.5 L907.7 407.5 L914.9 413.2 L922.1 412.7 L929.3 418.8 L936.5 407.5" fill="none" stroke="#00a1b2" stroke-width="1.4" stroke-linejoin="miter" stroke-miterlimit="3" stroke-linecap="butt" stroke-opacity="1"/><path d="M77.8 412.2 L85.0 417.4 L92.2 414.6 L99.5 419.1 L106.7 421.2 L113.9 425.3 L121.1 416.7 L128.3 411.6 L135.5 412.7 L142.8 410.9 L150.0 426.7 L157.2 415.1 L164.4 428.7 L171.6 413.8 L178.8 424.9 L186.1 418.8 L193.3 416.1 L200.5 426.2 L207.7 420.5 L214.9 429.0 L222.1 419.0 L229.4 418.1 L236.6 416.8 L243.8 429.1 L251.0 429.4 L258.2 429.4 L265.4 424.9 L272.6 418.2 L279.9 417.7 L287.1 429.4 L294.3 425.7 L301.5 423.4 L308.7 428.1 L315.9 421.5 L323.2 425.8 L330.4 421.3 L337.6 410.0 L344.8 419.6 L352.0 424.6 L359.2 423.4 L366.5 415.6 L373.7 422.7 L380.9 426.7 L388.1 419.4 L395.3 415.9 L402.5 427.0 L409.8 415.6 L417.0 415.2 L424.2 419.6 L431.4 419.6 L438.6 427.5 L445.8 429.4 L453.0 419.3 L460.3 427.0 L467.5 427.6 L474.7 428.8 L481.9 426.1 L489.1 422.9 L496.3 428.2 L503.6 413.4 L510.8 429.4 L518.0 428.0 L525.2 417.4 L532.4 429.4 L539.6 428.5 L546.9 424.7 L554.1 429.4 L561.3 425.2 L568.5 420.7 L575.7 428.5 L582.9 420.6 L590.2 411.4 L597.4 425.0 L604.6 415.9 L611.8 424.4 L619.0 422.2 L626.2 424.0 L633.4 418.5 L640.7 424.8 L647.9 421.4 L655.1 417.1 L662.3 427.6 L669.5 418.7 L676.7 429.1 L684.0 419.4 L691.2 422.7 L698.4 420.0 L705.6 422.0 L712.8 418.4 L720.0 417.3 L727.3 415.8 L734.5 420.8 L741.7 422.5 L748.9 417.2 L756.1 424.7 L763.3 427.6 L770.6 426.3 L777.8 417.1 L785.0 413.0 L792.2 418.1 L799.4 415.5 L806.6 424.7 L813.8 415.5 L821.1 414.1 L828.3 426.9 L835.5 425.2 L842.7 418.3 L849.9 411.2 L857.1 422.2 L864.4 418.3 L871.6 425.8 L878.8 418.8 L886.0 424.4 L893.2 427.2 L900.4 421.1 L907.7 429.4 L914.9 418.4 L922.1 429.4 L929.3 424.2 L936.5 429.4" fill="none" stroke="#e6be00" stroke-width="1.4" stroke-linejoin="miter" stroke-miterlimit="3" stroke-linecap="butt" stroke-opacity="1"/><path d="M77.8 421.6 L85.0 417.7 L92.2 417.2 L99.5 421.1 L106.7 418.0 L113.9 416.0 L121.1 427.4 L128.3 425.5 L135.5 416.9 L142.8 420.9 L150.0 416.4 L157.2 419.1 L164.4 424.2 L171.6 419.9 L178.8 415.4 L186.1 420.7 L193.3 416.4 L200.5 423.6 L207.7 422.1 L214.9 422.7 L222.1 419.4 L229.4 421.0 L236.6 422.7 L243.8 418.4 L251.0 424.1 L258.2 420.4 L265.4 424.9 L272.6 416.4 L279.9 421.8 L287.1 421.9 L294.3 415.2 L301.5 421.0 L308.7 419.2 L315.9 415.0 L323.2 423.2 L330.4 424.4 L337.6 427.9 L344.8 425.0 L352.0 424.9 L359.2 421.9 L366.5 421.1 L373.7 426.5 L380.9 427.9 L388.1 425.3 L395.3 417.7 L402.5 417.5 L409.8 419.0 L417.0 414.8 L424.2 418.7 L431.4 425.0 L438.6 419.7 L445.8 415.3 L453.0 422.3 L460.3 421.7 L467.5 423.2 L474.7 428.2 L481.9 422.4 L489.1 429.1 L496.3 424.4 L503.6 428.1 L510.8 420.3 L518.0 425.4 L525.2 422.3 L532.4 424.1 L539.6 425.5 L546.9 429.2 L554.1 429.4 L561.3 422.4 L568.5 422.1 L575.7 424.8 L582.9 426.1 L590.2 419.9 L597.4 426.5 L604.6 422.9 L611.8 423.4 L619.0 416.2 L626.2 420.9 L633.4 421.2 L640.7 418.4 L647.9 427.0 L655.1 421.1 L662.3 426.7 L669.5 426.7 L676.7 424.5 L684.0 423.8 L691.2 420.2 L698.4 422.4 L705.6 427.6 L712.8 422.0 L720.0 418.8 L727.3 426.1 L734.5 425.3 L741.7 427.1 L748.9 419.0 L756.1 416.4 L763.3 421.7 L770.6 418.8 L777.8 422.2 L785.0 429.4 L792.2 427.9 L799.4 417.7 L806.6 424.9 L813.8 423.6 L821.1 424.5 L828.3 421.4 L835.5 424.4 L842.7 423.9 L849.9 425.1 L857.1 424.4 L864.4 422.7 L871.6 418.4 L878.8 422.5 L886.0 415.3 L893.2 423.6 L900.4 418.7 L907.7 426.3 L914.9 414.9 L922.1 421.8 L929.3 423.0 L936.5 420.6" fill="none" stroke="#debbf3" stroke-width="1.4" stroke-linejoin="miter" stroke-miterlimit="3" stroke-linecap="butt" stroke-opacity="1"/><path d="M77.8 419.0 L85.0 412.8 L92.2 423.6 L99.5 423.3 L106.7 425.6 L113.9 420.1 L121.1 422.4 L128.3 415.4 L135.5 420.9 L142.8 423.4 L150.0 421.9 L157.2 414.4 L164.4 409.8 L171.6 409.2 L178.8 417.8 L186.1 412.3 L193.3 419.2 L200.5 409.7 L207.7 413.5 L214.9 421.6 L222.1 419.3 L229.4 420.5 L236.6 416.4 L243.8 412.5 L251.0 420.9 L258.2 412.4 L265.4 413.7 L272.6 413.7 L279.9 411.0 L287.1 416.4 L294.3 408.2 L301.5 416.1 L308.7 417.2 L315.9 421.2 L323.2 411.5 L330.4 415.4 L337.6 411.5 L344.8 410.6 L352.0 408.0 L359.2 410.2 L366.5 415.9 L373.7 414.0 L380.9 416.3 L388.1 414.2 L395.3 413.2 L402.5 407.5 L409.8 414.3 L417.0 407.5 L424.2 407.5 L431.4 407.5 L438.6 413.5 L445.8 410.3 L453.0 408.0 L460.3 417.2 L467.5 421.8 L474.7 423.5 L481.9 419.0 L489.1 423.3 L496.3 420.0 L503.6 417.3 L510.8 408.2 L518.0 413.7 L525.2 414.0 L532.4 408.8 L539.6 408.5 L546.9 419.0 L554.1 409.1 L561.3 414.1 L568.5 409.4 L575.7 418.0 L582.9 416.8 L590.2 410.1 L597.4 409.5 L604.6 416.3 L611.8 414.5 L619.0 423.0 L626.2 412.6 L633.4 417.2 L640.7 413.3 L647.9 418.8 L655.1 407.5 L662.3 415.6 L669.5 407.5 L676.7 417.9 L684.0 412.9 L691.2 416.9 L698.4 414.8 L705.6 412.3 L712.8 414.6 L720.0 418.3 L727.3 411.6 L734.5 407.5 L741.7 407.5 L748.9 421.5 L756.1 409.7 L763.3 407.5 L770.6 407.7 L777.8 418.6 L785.0 409.3 L792.2 412.8 L799.4 418.7 L806.6 415.8 L813.8 421.7 L821.1 420.6 L828.3 413.4 L835.5 421.2 L842.7 421.7 L849.9 410.9 L857.1 416.5 L864.4 412.8 L871.6 412.1 L878.8 411.6 L886.0 420.1 L893.2 412.9 L900.4 420.7 L907.7 411.0 L914.9 416.2 L922.1 408.1 L929.3 412.2 L936.5 421.2" fill="none" stroke="#97a9ff" stroke-width="1.4" stroke-linejoin="miter" stroke-miterlimit="3" stroke-linecap="butt" stroke-opacity="1"/><path d="M77.8 424.4 L85.0 427.4 L92.2 429.4 L99.5 425.7 L106.7 426.9 L113.9 419.8 L121.1 419.5 L128.3 429.0 L135.5 428.7 L142.8 429.4 L150.0 417.5 L157.2 425.9 L164.4 426.0 L171.6 424.2 L178.8 419.5 L186.1 429.4 L193.3 418.6 L200.5 420.8 L207.7 421.7 L214.9 423.8 L222.1 419.0 L229.4 414.2 L236.6 424.2 L243.8 416.8 L251.0 418.2 L258.2 415.8 L265.4 422.9 L272.6 428.5 L279.9 417.2 L287.1 426.1 L294.3 423.7 L301.5 418.8 L308.7 424.0 L315.9 420.1 L323.2 424.4 L330.4 421.3 L337.6 424.4 L344.8 423.6 L352.0 417.4 L359.2 425.6 L366.5 419.1 L373.7 422.3 L380.9 429.4 L388.1 424.0 L395.3 429.4 L402.5 429.4 L409.8 424.1 L417.0 418.1 L424.2 417.9 L431.4 419.6 L438.6 429.1 L445.8 418.5 L453.0 429.1 L460.3 418.2 L467.5 414.9 L474.7 429.4 L481.9 429.4 L489.1 422.0 L496.3 429.4 L503.6 424.9 L510.8 418.5 L518.0 418.6 L525.2 426.2 L532.4 429.1 L539.6 415.9 L546.9 425.8 L554.1 427.9 L561.3 420.7 L568.5 425.3 L575.7 429.4 L582.9 420.2 L590.2 424.0 L597.4 420.0 L604.6 423.7 L611.8 415.3 L619.0 417.7 L626.2 425.4 L633.4 419.4 L640.7 420.5 L647.9 422.4 L655.1 421.1 L662.3 422.7 L669.5 421.0 L676.7 418.1 L684.0 415.9 L691.2 423.6 L698.4 425.1 L705.6 416.2 L712.8 414.8 L720.0 414.8 L727.3 415.8 L734.5 419.6 L741.7 418.3 L748.9 426.0 L756.1 426.3 L763.3 415.5 L770.6 417.9 L777.8 415.8 L785.0 422.0 L792.2 424.6 L799.4 423.7 L806.6 425.5 L813.8 419.7 L821.1 421.7 L828.3 416.1 L835.5 421.0 L842.7 424.0 L849.9 422.8 L857.1 415.4 L864.4 412.4 L871.6 419.1 L878.8 415.6 L886.0 415.1 L893.2 414.9 L900.4 426.4 L907.7 425.0 L914.9 425.8 L922.1 417.4 L929.3 422.5 L936.5 419.5" fill="none" stroke="#4fd5e0" stroke-width="1.4" stroke-linejoin="miter" stroke-miterlimit="3" stroke-linecap="butt" stroke-opacity="1"/><path d="M77.8 424.1 L85.0 418.8 L92.2 429.4 L99.5 423.1 L106.7 417.0 L113.9 414.0 L121.1 429.4 L128.3 428.5 L135.5 423.0 L142.8 429.4 L150.0 421.4 L157.2 424.2 L164.4 423.1 L171.6 414.5 L178.8 410.2 L186.1 415.2 L193.3 416.2 L200.5 410.8 L207.7 414.1 L214.9 422.0 L222.1 412.2 L229.4 408.7 L236.6 415.8 L243.8 421.1 L251.0 428.1 L258.2 421.7 L265.4 425.1 L272.6 417.3 L279.9 427.8 L287.1 422.0 L294.3 408.8 L301.5 418.7 L308.7 420.3 L315.9 422.0 L323.2 426.9 L330.4 427.3 L337.6 421.1 L344.8 416.5 L352.0 412.6 L359.2 419.5 L366.5 415.6 L373.7 418.0 L380.9 412.6 L388.1 413.8 L395.3 429.4 L402.5 429.0 L409.8 429.4 L417.0 418.0 L424.2 412.4 L431.4 414.7 L438.6 426.8 L445.8 422.0 L453.0 421.9 L460.3 427.8 L467.5 412.2 L474.7 413.6 L481.9 427.8 L489.1 417.6 L496.3 417.3 L503.6 418.6 L510.8 428.0 L518.0 423.5 L525.2 428.7 L532.4 410.3 L539.6 417.0 L546.9 429.2 L554.1 420.1 L561.3 411.4 L568.5 416.0 L575.7 424.4 L582.9 416.7 L590.2 411.7 L597.4 427.4 L604.6 429.1 L611.8 416.4 L619.0 423.5 L626.2 421.6 L633.4 422.1 L640.7 429.4 L647.9 429.4 L655.1 427.5 L662.3 425.6 L669.5 423.4 L676.7 426.3 L684.0 426.7 L691.2 414.5 L698.4 421.0 L705.6 417.1 L712.8 429.0 L720.0 426.3 L727.3 422.2 L734.5 428.1 L741.7 415.8 L748.9 429.4 L756.1 428.2 L763.3 418.4 L770.6 428.6 L777.8 429.4 L785.0 419.4 L792.2 421.4 L799.4 425.3 L806.6 429.4 L813.8 419.4 L821.1 429.1 L828.3 423.0 L835.5 428.5 L842.7 428.2 L849.9 422.8 L857.1 429.4 L864.4 412.2 L871.6 426.5 L878.8 426.3 L886.0 418.2 L893.2 428.3 L900.4 423.2 L907.7 413.3 L914.9 423.1 L922.1 428.5 L929.3 421.8 L936.5 423.9" fill="none" stroke="#4556d7" stroke-width="1.4" stroke-linejoin="miter" stroke-miterlimit="3" stroke-linecap="butt" stroke-opacity="1"/><path d="M77.8 420.4 L85.0 420.7 L92.2 409.3 L99.5 407.5 L106.7 411.2 L113.9 420.5 L121.1 422.5 L128.3 409.6 L135.5 410.9 L142.8 411.1 L150.0 407.5 L157.2 424.9 L164.4 413.2 L171.6 412.3 L178.8 409.4 L186.1 421.8 L193.3 411.9 L200.5 425.7 L207.7 410.4 L214.9 417.4 L222.1 407.5 L229.4 408.9 L236.6 407.5 L243.8 407.5 L251.0 409.9 L258.2 414.0 L265.4 412.0 L272.6 417.2 L279.9 413.4 L287.1 415.0 L294.3 418.5 L301.5 416.9 L308.7 407.8 L315.9 410.3 L323.2 407.5 L330.4 415.0 L337.6 415.7 L344.8 407.5 L352.0 408.8 L359.2 415.5 L366.5 418.7 L373.7 410.8 L380.9 419.4 L388.1 410.0 L395.3 410.9 L402.5 409.8 L409.8 422.7 L417.0 423.7 L424.2 412.1 L431.4 407.5 L438.6 415.7 L445.8 419.4 L453.0 407.5 L460.3 414.0 L467.5 413.4 L474.7 407.5 L481.9 407.5 L489.1 413.1 L496.3 407.5 L503.6 421.0 L510.8 407.8 L518.0 416.5 L525.2 407.5 L532.4 418.2 L539.6 413.7 L546.9 407.5 L554.1 415.9 L561.3 418.0 L568.5 417.9 L575.7 425.1 L582.9 411.4 L590.2 413.2 L597.4 421.1 L604.6 414.2 L611.8 419.9 L619.0 410.5 L626.2 419.3 L633.4 412.4 L640.7 423.2 L647.9 412.7 L655.1 414.3 L662.3 421.5 L669.5 418.2 L676.7 409.3 L684.0 409.0 L691.2 411.9 L698.4 417.2 L705.6 426.9 L712.8 410.2 L720.0 411.5 L727.3 407.5 L734.5 420.1 L741.7 416.1 L748.9 409.7 L756.1 417.4 L763.3 420.8 L770.6 410.1 L777.8 407.5 L785.0 417.3 L792.2 426.6 L799.4 426.3 L806.6 419.6 L813.8 421.3 L821.1 415.3 L828.3 418.9 L835.5 413.1 L842.7 407.5 L849.9 408.2 L857.1 418.6 L864.4 413.5 L871.6 423.2 L878.8 415.3 L886.0 412.1 L893.2 417.7 L900.4 408.9 L907.7 417.2 L914.9 415.6 L922.1 419.9 L929.3 409.8 L936.5 415.0" fill="none" stroke="#6170e6" stroke-width="1.4" stroke-linejoin="miter" stroke-miterlimit="3" stroke-linecap="butt" stroke-opacity="1"/><path d="M77.8 415.8 L85.0 418.1 L92.2 429.4 L99.5 418.4 L106.7 420.8 L113.9 426.6 L121.1 420.2 L128.3 426.0 L135.5 427.5 L142.8 426.4 L150.0 424.0 L157.2 427.2 L164.4 418.7 L171.6 426.3 L178.8 420.9 L186.1 416.0 L193.3 425.9 L200.5 415.3 L207.7 416.4 L214.9 422.7 L222.1 413.6 L229.4 426.2 L236.6 427.5 L243.8 408.8 L251.0 421.3 L258.2 422.1 L265.4 415.3 L272.6 412.2 L279.9 414.1 L287.1 418.8 L294.3 423.4 L301.5 419.7 L308.7 423.1 L315.9 429.4 L323.2 428.6 L330.4 427.2 L337.6 416.5 L344.8 414.9 L352.0 420.3 L359.2 422.2 L366.5 411.1 L373.7 421.5 L380.9 411.9 L388.1 417.7 L395.3 424.8 L402.5 418.6 L409.8 418.1 L417.0 411.4 L424.2 416.7 L431.4 424.1 L438.6 420.9 L445.8 426.0 L453.0 421.2 L460.3 419.3 L467.5 417.5 L474.7 414.0 L481.9 426.9 L489.1 418.2 L496.3 423.2 L503.6 427.6 L510.8 419.8 L518.0 414.5 L525.2 417.6 L532.4 416.7 L539.6 428.3 L546.9 423.3 L554.1 421.9 L561.3 425.5 L568.5 420.9 L575.7 420.6 L582.9 423.5 L590.2 429.4 L597.4 425.9 L604.6 415.0 L611.8 413.9 L619.0 417.2 L626.2 423.9 L633.4 422.5 L640.7 427.4 L647.9 415.9 L655.1 429.3 L662.3 422.8 L669.5 425.7 L676.7 425.4 L684.0 417.6 L691.2 417.9 L698.4 429.4 L705.6 422.8 L712.8 428.5 L720.0 425.2 L727.3 425.4 L734.5 417.7 L741.7 421.6 L748.9 420.9 L756.1 428.4 L763.3 417.6 L770.6 417.6 L777.8 429.4 L785.0 429.4 L792.2 429.4 L799.4 427.9 L806.6 424.7 L813.8 418.9 L821.1 429.4 L828.3 429.4 L835.5 429.4 L842.7 417.6 L849.9 425.3 L857.1 417.9 L864.4 415.0 L871.6 426.5 L878.8 416.8 L886.0 425.3 L893.2 419.1 L900.4 422.3 L907.7 425.1 L914.9 422.8 L922.1 419.3 L929.3 419.5 L936.5 421.2" fill="none" stroke="#f5d30f" stroke-width="1.4" stroke-linejoin="miter" stroke-miterlimit="3" stroke-linecap="butt" stroke-opacity="1"/><path d="M77.8 411.6 L85.0 417.0 L92.2 411.1 L99.5 411.3 L106.7 415.4 L113.9 410.6 L121.1 413.2 L128.3 412.3 L135.5 416.8 L142.8 415.9 L150.0 420.5 L157.2 417.7 L164.4 415.8 L171.6 411.1 L178.8 413.8 L186.1 413.8 L193.3 417.4 L200.5 422.0 L207.7 418.7 L214.9 421.7 L222.1 419.2 L229.4 415.6 L236.6 417.3 L243.8 414.0 L251.0 409.0 L258.2 410.7 L265.4 418.0 L272.6 417.2 L279.9 417.1 L287.1 412.3 L294.3 419.0 L301.5 416.1 L308.7 409.4 L315.9 414.1 L323.2 419.3 L330.4 411.4 L337.6 415.2 L344.8 418.6 L352.0 416.1 L359.2 411.9 L366.5 417.5 L373.7 418.1 L380.9 422.8 L388.1 423.8 L395.3 423.7 L402.5 422.8 L409.8 417.7 L417.0 420.0 L424.2 419.5 L431.4 417.6 L438.6 412.7 L445.8 408.5 L453.0 418.4 L460.3 412.6 L467.5 414.6 L474.7 415.8 L481.9 415.5 L489.1 415.1 L496.3 413.3 L503.6 413.9 L510.8 418.7 L518.0 417.7 L525.2 415.1 L532.4 418.0 L539.6 416.8 L546.9 408.7 L554.1 407.5 L561.3 409.4 L568.5 414.9 L575.7 408.8 L582.9 408.9 L590.2 409.2 L597.4 416.8 L604.6 416.8 L611.8 412.3 L619.0 414.8 L626.2 418.1 L633.4 414.7 L640.7 421.2 L647.9 416.3 L655.1 416.6 L662.3 412.1 L669.5 414.5 L676.7 413.3 L684.0 411.1 L691.2 410.2 L698.4 410.9 L705.6 412.1 L712.8 407.5 L720.0 407.5 L727.3 409.7 L734.5 407.8 L741.7 411.1 L748.9 407.5 L756.1 407.5 L763.3 414.6 L770.6 414.3 L777.8 416.7 L785.0 413.1 L792.2 413.1 L799.4 413.6 L806.6 419.4 L813.8 421.7 L821.1 418.1 L828.3 415.6 L835.5 423.2 L842.7 418.0 L849.9 420.9 L857.1 416.2 L864.4 416.9 L871.6 419.7 L878.8 415.9 L886.0 408.7 L893.2 411.4 L900.4 415.0 L907.7 413.1 L914.9 411.7 L922.1 415.9 L929.3 418.0 L936.5 416.2" fill="none" stroke="#7c8cf4" stroke-width="1.4" stroke-linejoin="miter" stroke-miterlimit="3" stroke-linecap="butt" stroke-opacity="1"/><path d="M77.8 415.3 L85.0 409.5 L92.2 418.5 L99.5 416.0 L106.7 419.5 L113.9 407.9 L121.1 412.5 L128.3 408.7 L135.5 415.5 L142.8 417.4 L150.0 414.6 L157.2 419.9 L164.4 407.9 L171.6 423.9 L178.8 420.5 L186.1 407.5 L193.3 410.8 L200.5 421.6 L207.7 419.7 L214.9 417.5 L222.1 419.6 L229.4 411.2 L236.6 413.2 L243.8 416.2 L251.0 422.6 L258.2 420.7 L265.4 417.8 L272.6 416.8 L279.9 421.4 L287.1 426.0 L294.3 427.4 L301.5 413.4 L308.7 409.7 L315.9 414.8 L323.2 425.0 L330.4 421.4 L337.6 424.5 L344.8 418.9 L352.0 418.6 L359.2 414.9 L366.5 415.5 L373.7 417.5 L380.9 408.4 L388.1 424.2 L395.3 411.5 L402.5 408.7 L409.8 407.8 L417.0 415.3 L424.2 421.2 L431.4 414.2 L438.6 416.6 L445.8 414.1 L453.0 412.6 L460.3 420.6 L467.5 412.5 L474.7 407.5 L481.9 413.9 L489.1 413.1 L496.3 407.5 L503.6 420.0 L510.8 423.0 L518.0 422.6 L525.2 408.7 L532.4 418.3 L539.6 414.2 L546.9 415.8 L554.1 417.0 L561.3 411.1 L568.5 418.8 L575.7 416.9 L582.9 410.7 L590.2 417.1 L597.4 408.8 L604.6 423.4 L611.8 411.2 L619.0 414.3 L626.2 419.5 L633.4 425.6 L640.7 424.8 L647.9 423.8 L655.1 417.3 L662.3 415.0 L669.5 426.3 L676.7 412.1 L684.0 411.3 L691.2 422.3 L698.4 413.3 L705.6 425.1 L712.8 411.6 L720.0 410.1 L727.3 417.1 L734.5 407.5 L741.7 411.7 L748.9 408.3 L756.1 418.9 L763.3 415.9 L770.6 412.3 L777.8 421.2 L785.0 412.7 L792.2 413.1 L799.4 420.2 L806.6 422.8 L813.8 417.9 L821.1 422.0 L828.3 420.9 L835.5 422.3 L842.7 414.1 L849.9 417.5 L857.1 426.6 L864.4 413.6 L871.6 421.2 L878.8 425.0 L886.0 417.3 L893.2 415.4 L900.4 416.2 L907.7 423.3 L914.9 425.5 L922.1 424.8 L929.3 424.0 L936.5 415.3" fill="none" stroke="#b4e5f9" stroke-width="1.4" stroke-linejoin="miter" stroke-miterlimit="3" stroke-linecap="butt" stroke-opacity="1"/><path d="M77.8 411.0 L85.0 416.5 L92.2 419.0 L99.5 422.8 L106.7 414.4 L113.9 420.6 L121.1 417.4 L128.3 413.6 L135.5 417.8 L142.8 416.9 L150.0 412.0 L157.2 419.4 L164.4 420.0 L171.6 418.2 L178.8 410.7 L186.1 414.7 L193.3 417.6 L200.5 410.2 L207.7 412.7 L214.9 416.7 L222.1 407.5 L229.4 408.5 L236.6 412.1 L243.8 417.4 L251.0 414.4 L258.2 422.5 L265.4 418.8 L272.6 417.6 L279.9 411.5 L287.1 413.1 L294.3 421.3 L301.5 418.7 L308.7 419.2 L315.9 417.3 L323.2 418.5 L330.4 413.6 L337.6 418.2 L344.8 422.4 L352.0 420.1 L359.2 413.8 L366.5 423.2 L373.7 426.0 L380.9 418.1 L388.1 422.6 L395.3 418.5 L402.5 417.3 L409.8 425.9 L417.0 416.7 L424.2 414.2 L431.4 420.5 L438.6 419.5 L445.8 422.7 L453.0 421.5 L460.3 420.1 L467.5 424.5 L474.7 424.8 L481.9 426.5 L489.1 420.7 L496.3 420.7 L503.6 416.0 L510.8 418.2 L518.0 420.9 L525.2 412.7 L532.4 413.7 L539.6 420.3 L546.9 415.2 L554.1 422.6 L561.3 415.8 L568.5 420.8 L575.7 417.0 L582.9 417.6 L590.2 417.5 L597.4 416.0 L604.6 419.0 L611.8 421.6 L619.0 420.2 L626.2 416.3 L633.4 416.7 L640.7 412.9 L647.9 413.5 L655.1 423.3 L662.3 419.9 L669.5 423.3 L676.7 416.3 L684.0 415.4 L691.2 414.8 L698.4 421.0 L705.6 416.0 L712.8 420.4 L720.0 419.9 L727.3 422.0 L734.5 417.7 L741.7 417.3 L748.9 418.7 L756.1 428.3 L763.3 423.2 L770.6 418.7 L777.8 423.3 L785.0 416.4 L792.2 421.8 L799.4 410.5 L806.6 421.5 L813.8 424.0 L821.1 415.0 L828.3 417.9 L835.5 428.8 L842.7 422.7 L849.9 426.0 L857.1 426.2 L864.4 425.6 L871.6 421.9 L878.8 421.4 L886.0 416.9 L893.2 414.9 L900.4 417.8 L907.7 421.0 L914.9 415.6 L922.1 424.9 L929.3 412.4 L936.5 417.4" fill="none" stroke="#e6be00" stroke-width="1.4" stroke-linejoin="miter" stroke-miterlimit="3" stroke-linecap="butt" stroke-opacity="1"/><path d="M77.8 406.1 L85.0 405.4 L92.2 405.8 L99.5 406.1 L106.7 405.9 L113.9 406.2 L121.1 406.3 L128.3 409.8 L135.5 405.8 L142.8 409.1 L150.0 405.7 L157.2 406.2 L164.4 405.5 L171.6 405.3 L178.8 405.9 L186.1 406.0 L193.3 405.4 L200.5 405.7 L207.7 406.2 L214.9 405.5 L222.1 409.3 L229.4 408.9 L236.6 405.5 L243.8 406.0 L251.0 405.9 L258.2 406.3 L265.4 405.9 L272.6 405.8 L279.9 406.0 L287.1 406.3 L294.3 406.3 L301.5 405.6 L308.7 405.3 L315.9 408.9 L323.2 405.6 L330.4 409.3 L337.6 405.3 L344.8 405.7 L352.0 409.7 L359.2 405.3 L366.5 409.9 L373.7 405.2 L380.9 409.7 L388.1 405.4 L395.3 409.3 L402.5 405.9 L409.8 406.4 L417.0 406.3 L424.2 406.2 L431.4 405.4 L438.6 406.3 L445.8 405.8 L453.0 406.2 L460.3 409.1 L467.5 405.4 L474.7 406.1 L481.9 405.8 L489.1 405.7 L496.3 405.8 L503.6 405.2 L510.8 406.3 L518.0 409.6 L525.2 409.5 L532.4 405.3 L539.6 405.4 L546.9 405.5 L554.1 406.0 L561.3 406.1 L568.5 405.7 L575.7 406.2 L582.9 405.4 L590.2 408.9 L597.4 409.7 L604.6 405.5 L611.8 405.6 L619.0 405.8 L626.2 405.3 L633.4 405.6 L640.7 405.8 L647.9 409.3 L655.1 405.9 L662.3 405.9 L669.5 406.0 L676.7 405.9 L684.0 408.9 L691.2 406.3 L698.4 405.9 L705.6 405.7 L712.8 409.7 L720.0 405.4 L727.3 406.0 L734.5 409.6 L741.7 405.4 L748.9 406.1 L756.1 405.6 L763.3 405.8 L770.6 406.1 L777.8 405.4 L785.0 406.2 L792.2 405.3 L799.4 409.5 L806.6 406.3 L813.8 406.3 L821.1 405.6 L828.3 405.4 L835.5 409.3 L842.7 405.7 L849.9 406.1 L857.1 409.2 L864.4 406.1 L871.6 405.7 L878.8 405.9 L886.0 406.2 L893.2 406.0 L900.4 405.3 L907.7 409.3 L914.9 405.9 L922.1 405.6 L929.3 409.9 L936.5 405.7" fill="none" stroke="#ffb98a" stroke-width="1.2" stroke-linejoin="miter" stroke-miterlimit="3" stroke-linecap="butt" stroke-opacity="1"/><path d="M77.8 406.9 L85.0 406.8 L92.2 406.7 L99.5 406.9 L106.7 407.0 L113.9 406.8 L121.1 407.0 L128.3 406.8 L135.5 407.0 L142.8 407.0 L150.0 406.9 L157.2 406.7 L164.4 407.0 L171.6 407.0 L178.8 407.0 L186.1 407.0 L193.3 406.9 L200.5 406.9 L207.7 406.8 L214.9 406.9 L222.1 406.9 L229.4 406.9 L236.6 406.8 L243.8 406.7 L251.0 406.9 L258.2 406.7 L265.4 407.0 L272.6 406.7 L279.9 406.9 L287.1 406.8 L294.3 406.9 L301.5 407.0 L308.7 407.0 L315.9 406.7 L323.2 406.9 L330.4 406.8 L337.6 406.9 L344.8 406.9 L352.0 407.0 L359.2 407.0 L366.5 406.9 L373.7 406.8 L380.9 406.9 L388.1 407.0 L395.3 406.8 L402.5 406.9 L409.8 407.0 L417.0 407.0 L424.2 407.0 L431.4 406.8 L438.6 406.9 L445.8 406.9 L453.0 407.0 L460.3 406.9 L467.5 406.9 L474.7 406.9 L481.9 406.8 L489.1 406.8 L496.3 406.8 L503.6 406.7 L510.8 406.8 L518.0 407.0 L525.2 407.0 L532.4 407.0 L539.6 407.0 L546.9 406.9 L554.1 406.8 L561.3 406.8 L568.5 406.9 L575.7 407.0 L582.9 406.7 L590.2 406.8 L597.4 406.9 L604.6 407.0 L611.8 406.7 L619.0 407.0 L626.2 406.8 L633.4 407.0 L640.7 406.8 L647.9 406.9 L655.1 406.7 L662.3 406.9 L669.5 407.0 L676.7 407.0 L684.0 406.8 L691.2 406.7 L698.4 406.8 L705.6 406.8 L712.8 406.9 L720.0 407.0 L727.3 407.0 L734.5 406.7 L741.7 407.0 L748.9 406.8 L756.1 406.9 L763.3 407.0 L770.6 406.9 L777.8 406.7 L785.0 407.0 L792.2 407.0 L799.4 406.8 L806.6 406.8 L813.8 406.9 L821.1 407.0 L828.3 406.7 L835.5 407.0 L842.7 407.0 L849.9 407.0 L857.1 406.9 L864.4 406.9 L871.6 406.9 L878.8 406.8 L886.0 406.7 L893.2 406.9 L900.4 407.0 L907.7 406.8 L914.9 407.0 L922.1 406.9 L929.3 407.0 L936.5 406.8" fill="none" stroke="#4556d7" stroke-width="1.5" stroke-linejoin="miter" stroke-miterlimit="3" stroke-linecap="butt" stroke-opacity="1"/><path d="M77.8 415.5 L85.0 425.7 L92.2 415.6 L99.5 425.5 L106.7 415.3 L113.9 423.1 L121.1 415.3 L128.3 422.1 L135.5 413.4 L142.8 423.5 L150.0 421.9 L157.2 411.4 L164.4 411.5 L171.6 413.4 L178.8 413.2 L186.1 422.8 L193.3 411.7 L200.5 423.5 L207.7 415.6 L214.9 425.5 L222.1 425.9 L229.4 415.4 L236.6 412.6 L243.8 423.2 L251.0 412.0 L258.2 425.5 L265.4 414.5 L272.6 425.2 L279.9 423.2 L287.1 414.1 L294.3 412.3 L301.5 423.3 L308.7 411.7 L315.9 414.6 L323.2 422.5 L330.4 421.7 L337.6 424.1 L344.8 413.4 L352.0 424.3 L359.2 411.5 L366.5 422.2 L373.7 412.9 L380.9 412.6 L388.1 415.8 L395.3 422.7 L402.5 422.2 L409.8 412.3 L417.0 424.1 L424.2 425.2 L431.4 413.7 L438.6 426.3 L445.8 424.9 L453.0 412.5 L460.3 425.5 L467.5 411.7 L474.7 423.7 L481.9 412.1 L489.1 426.3 L496.3 411.6 L503.6 423.9 L510.8 422.2 L518.0 412.5 L525.2 414.2 L532.4 412.9 L539.6 422.1 L546.9 413.3 L554.1 422.8 L561.3 415.7 L568.5 411.9 L575.7 423.7 L582.9 413.1 L590.2 426.4 L597.4 425.1 L604.6 421.9 L611.8 414.4 L619.0 423.6 L626.2 425.7 L633.4 422.6 L640.7 416.0 L647.9 421.8 L655.1 414.6 L662.3 424.3 L669.5 414.6 L676.7 412.7 L684.0 423.8 L691.2 414.7 L698.4 423.8 L705.6 415.2 L712.8 411.7 L720.0 412.0 L727.3 422.4 L734.5 412.4 L741.7 415.6 L748.9 423.2 L756.1 413.1 L763.3 425.7 L770.6 411.6 L777.8 423.0 L785.0 411.3 L792.2 425.6 L799.4 413.4 L806.6 411.2 L813.8 415.6 L821.1 426.5 L828.3 411.3 L835.5 421.6 L842.7 422.8 L849.9 414.3 L857.1 426.1 L864.4 425.9 L871.6 412.0 L878.8 423.6 L886.0 422.8 L893.2 413.2 L900.4 425.0 L907.7 415.6 L914.9 415.7 L922.1 423.2 L929.3 415.7 L936.5 412.1" fill="none" stroke="#ffc9a3" stroke-width="1.4" stroke-linejoin="miter" stroke-miterlimit="3" stroke-linecap="butt" stroke-opacity="1"/><path d="M77.8 425.3 L85.0 426.0 L92.2 412.7 L99.5 426.4 L106.7 424.5 L113.9 423.0 L121.1 409.3 L128.3 425.7 L135.5 411.1 L142.8 421.5 L150.0 423.2 L157.2 411.9 L164.4 423.1 L171.6 413.7 L178.8 421.4 L186.1 409.5 L193.3 409.1 L200.5 420.6 L207.7 424.1 L214.9 414.2 L222.1 422.0 L229.4 408.5 L236.6 421.0 L243.8 413.6 L251.0 423.2 L258.2 422.5 L265.4 411.5 L272.6 423.0 L279.9 412.4 L287.1 413.2 L294.3 424.3 L301.5 408.9 L308.7 425.0 L315.9 412.1 L323.2 424.2 L330.4 423.4 L337.6 410.2 L344.8 423.1 L352.0 411.6 L359.2 425.9 L366.5 423.9 L373.7 413.0 L380.9 424.9 L388.1 410.2 L395.3 412.0 L402.5 411.7 L409.8 425.7 L417.0 412.2 L424.2 413.9 L431.4 423.4 L438.6 424.3 L445.8 424.5 L453.0 413.9 L460.3 423.1 L467.5 411.2 L474.7 421.8 L481.9 423.0 L489.1 422.7 L496.3 411.1 L503.6 425.2 L510.8 412.8 L518.0 425.8 L525.2 414.1 L532.4 424.2 L539.6 421.2 L546.9 422.9 L554.1 411.8 L561.3 426.4 L568.5 426.0 L575.7 424.7 L582.9 414.1 L590.2 410.3 L597.4 422.4 L604.6 408.9 L611.8 420.7 L619.0 412.2 L626.2 426.4 L633.4 425.4 L640.7 411.8 L647.9 424.9 L655.1 425.2 L662.3 421.3 L669.5 413.7 L676.7 409.4 L684.0 422.0 L691.2 421.3 L698.4 414.3 L705.6 411.8 L712.8 409.6 L720.0 426.4 L727.3 426.1 L734.5 421.1 L741.7 421.9 L748.9 412.3 L756.1 413.9 L763.3 421.4 L770.6 423.5 L777.8 411.2 L785.0 412.3 L792.2 425.0 L799.4 409.1 L806.6 425.6 L813.8 424.0 L821.1 410.9 L828.3 421.2 L835.5 413.6 L842.7 424.8 L849.9 424.2 L857.1 410.0 L864.4 410.6 L871.6 423.9 L878.8 412.7 L886.0 425.7 L893.2 408.8 L900.4 422.2 L907.7 413.9 L914.9 423.8 L922.1 408.9 L929.3 424.4 L936.5 409.7" fill="none" stroke="#ffae78" stroke-width="1.4" stroke-linejoin="miter" stroke-miterlimit="3" stroke-linecap="butt" stroke-opacity="1"/><path d="M77.8 390.8 L85.0 390.8 L92.2 390.8 L99.5 390.8 L106.7 390.8 L113.9 390.8 L121.1 390.8 L128.3 390.8 L135.5 390.8 L142.8 390.8 L150.0 390.8 L157.2 390.8 L164.4 390.8 L171.6 390.8 L178.8 390.8 L186.1 390.8 L193.3 390.8 L200.5 390.8 L207.7 390.8 L214.9 390.8 L222.1 390.8 L229.4 390.8 L236.6 390.8 L243.8 390.8 L251.0 390.8 L258.2 390.8 L265.4 390.8 L272.6 390.8 L279.9 390.8 L287.1 390.8 L294.3 390.8 L301.5 390.8 L308.7 390.8 L315.9 390.8 L323.2 390.8 L330.4 390.8 L337.6 390.8 L344.8 390.8 L352.0 390.8 L359.2 390.8 L366.5 390.8 L373.7 390.8 L380.9 390.8 L388.1 390.8 L395.3 390.8 L402.5 390.8 L409.8 390.8 L417.0 390.8 L424.2 390.8 L431.4 390.8 L438.6 390.8 L445.8 390.8 L453.0 390.8 L460.3 390.8 L467.5 390.8 L474.7 390.8 L481.9 390.8 L489.1 390.8 L496.3 390.8 L503.6 390.8 L510.8 390.8 L518.0 390.8 L525.2 390.8 L532.4 390.8 L539.6 390.8 L546.9 390.8 L554.1 390.8 L561.3 390.8 L568.5 390.8 L575.7 390.8 L582.9 390.8 L590.2 390.8 L597.4 390.8 L604.6 390.8 L611.8 390.8 L619.0 390.8 L626.2 390.8 L633.4 390.8 L640.7 390.8 L647.9 390.8 L655.1 390.8 L662.3 390.8 L669.5 390.8 L676.7 390.8 L684.0 390.8 L691.2 390.8 L698.4 390.8 L705.6 390.8 L712.8 390.8 L720.0 390.8 L727.3 390.8 L734.5 390.8 L741.7 390.8 L748.9 390.8 L756.1 390.8 L763.3 390.8 L770.6 390.8 L777.8 390.8 L785.0 390.8 L792.2 390.8 L799.4 390.8 L806.6 390.8 L813.8 390.8 L821.1 390.8 L828.3 390.8 L835.5 390.8 L842.7 390.8 L849.9 390.8 L857.1 390.8 L864.4 390.8 L871.6 390.8 L878.8 390.8 L886.0 390.8 L893.2 390.8 L900.4 390.8 L907.7 390.8 L914.9 390.8" fill="none" stroke="#debbf3" stroke-width="1.7" stroke-linejoin="miter" stroke-miterlimit="3" stroke-linecap="butt" stroke-opacity="1"/><path d="M77.8 387.2 L85.0 387.2 L92.2 387.2 L99.5 387.2 L106.7 387.2 L113.9 387.2 L121.1 387.2 L128.3 387.2 L135.5 387.2 L142.8 387.2 L150.0 387.2 L157.2 387.2 L164.4 387.2 L171.6 387.2 L178.8 387.2 L186.1 387.2 L193.3 387.2 L200.5 387.2 L207.7 387.2 L214.9 387.2 L222.1 387.2 L229.4 387.2 L236.6 387.2 L243.8 387.2 L251.0 387.2 L258.2 387.2 L265.4 387.2 L272.6 387.2 L279.9 387.2 L287.1 387.2 L294.3 387.2 L301.5 387.2 L308.7 387.2 L315.9 387.2 L323.2 387.2 L330.4 387.2 L337.6 387.2 L344.8 387.2 L352.0 387.2 L359.2 387.2 L366.5 387.2 L373.7 387.2 L380.9 387.2 L388.1 387.2 L395.3 387.2 L402.5 387.2 L409.8 387.2 L417.0 387.2 L424.2 387.2 L431.4 387.2 L438.6 387.2 L445.8 387.2 L453.0 387.2 L460.3 387.2 L467.5 387.2 L474.7 387.2 L481.9 387.2 L489.1 387.2 L496.3 387.2 L503.6 387.2 L510.8 387.6 L518.0 407.0" fill="none" stroke="#4fd5e0" stroke-width="1.7" stroke-linejoin="miter" stroke-miterlimit="3" stroke-linecap="butt" stroke-opacity="1"/><path d="M532.4 405.0 L539.6 394.8 L546.9 392.1 L554.1 391.9 L561.3 391.9 L568.5 392.0 L575.7 392.0 L582.9 392.0 L590.2 392.0 L597.4 392.1 L604.6 392.1 L611.8 392.1 L619.0 392.1 L626.2 392.2 L633.4 392.2 L640.7 392.2 L647.9 392.3 L655.1 392.3 L662.3 392.3 L669.5 392.3 L676.7 392.4 L684.0 392.4 L691.2 392.4 L698.4 392.4 L705.6 392.5 L712.8 392.5 L720.0 392.5 L727.3 392.6 L734.5 392.6 L741.7 392.6 L748.9 392.6 L756.1 392.7 L763.3 392.7 L770.6 392.7 L777.8 392.7 L785.0 392.8 L792.2 392.8 L799.4 392.8 L806.6 391.2 L813.8 389.6 L821.1 388.1 L828.3 375.2 L835.5 381.3 L842.7 379.5" fill="none" stroke="#4fd5e0" stroke-width="1.7" stroke-linejoin="miter" stroke-miterlimit="3" stroke-linecap="butt" stroke-opacity="1"/><circle cx="936.5" cy="368.4" r="3.2" fill="#4fd5e0"/><path d="M78.0 396.1 L92.4 395.5 L107.5 399.3 L122.7 397.4 L135.3 400.1 L144.1 398.6 L156.8 398.6 L166.9 400.3 L179.5 399.3 L200.0 400.2 L225.0 401.4 L260.0 399.6 L290.0 399.6 L330.0 397.4 L350.0 394.6 L360.0 397.6 L372.0 390.2 L385.0 390.6 L420.0 392.2 L470.0 393.6 L520.0 391.0 L545.0 393.4 L560.0 395.2 L600.0 397.0 L633.0 397.6 L643.0 403.8 L650.0 407.0 L671.0 406.6 L687.6 396.4 L696.3 394.0 L720.0 396.2 L750.0 397.2 L763.0 393.2 L780.0 394.0 L793.0 396.4 L800.0 400.0 L813.0 400.2 L825.0 397.7 L842.8 391.4 L862.0 392.8 L890.0 393.2 L910.0 391.4 L923.0 389.0 L937.0 385.8" fill="none" stroke="#ef651f" stroke-width="1.7" stroke-linejoin="round"/><path d="M77.8 373.8 L85.0 373.8 L92.2 373.8 L99.5 373.8 L106.7 373.8 L113.9 373.8 L121.1 373.8 L128.3 373.8 L135.5 373.8 L142.8 373.8 L150.0 373.8 L157.2 373.8 L164.4 373.8 L171.6 373.8 L178.8 373.8 L186.1 373.8 L193.3 373.8 L200.5 373.8 L207.7 373.8 L214.9 373.8 L222.1 373.3 L229.4 373.3 L236.6 373.3 L243.8 373.3 L251.0 373.3 L258.2 373.3 L265.4 373.3 L272.6 373.3 L279.9 373.3 L287.1 373.3 L294.3 373.3 L301.5 373.3 L308.7 373.3 L315.9 373.3 L323.2 373.3 L330.4 373.3 L337.6 373.3 L344.8 373.3 L352.0 373.3 L359.2 373.3 L366.5 373.3 L373.7 373.3 L380.9 373.3 L388.1 373.3 L395.3 373.3 L402.5 373.3 L409.8 373.3 L417.0 373.3 L424.2 373.3 L431.4 373.3 L438.6 373.3 L445.8 373.3 L453.0 373.3 L460.3 373.3 L467.5 373.3 L474.7 373.3 L481.9 373.3 L489.1 373.3 L496.3 373.3 L503.6 373.8 L510.8 373.8 L518.0 373.8 L525.2 373.8 L532.4 373.8 L539.6 373.8 L546.9 373.8 L554.1 373.8 L561.3 373.8 L568.5 373.8 L575.7 373.8 L582.9 373.8 L590.2 373.8 L597.4 373.8 L604.6 373.8 L611.8 373.8 L619.0 373.8 L626.2 373.8 L633.4 373.8 L640.7 373.8 L647.9 373.8 L655.1 373.8 L662.3 373.8 L669.5 373.8 L676.7 373.8 L684.0 373.8 L691.2 373.8 L698.4 373.8 L705.6 373.8 L712.8 373.8 L720.0 373.8 L727.3 373.8 L734.5 373.8 L741.7 373.8 L748.9 373.8 L756.1 373.8 L763.3 373.8 L770.6 373.8 L777.8 373.8 L785.0 373.8 L792.2 373.8 L799.4 373.8 L806.6 373.8 L813.8 373.8 L821.1 373.8 L828.3 373.8 L835.5 373.8 L842.7 373.8 L849.9 373.8 L857.1 373.8 L864.4 373.8 L871.6 373.8 L878.8 373.8 L886.0 373.8 L893.2 373.8 L900.4 373.8 L907.7 373.8 L914.9 373.8 L922.1 373.8 L929.3 373.8 L936.5 373.8" fill="none" stroke="#fff29a" stroke-width="1.8" stroke-linejoin="miter" stroke-miterlimit="3" stroke-linecap="butt" stroke-opacity="1"/><path d="M78.0 383.0 L86.0 381.6 L96.0 377.0 L107.0 371.8 L116.0 373.6 L122.0 381.0 L128.0 375.0 L136.0 373.6 L143.0 383.4 L150.0 383.8 L157.0 379.6 L164.0 377.6 L172.0 385.0 L179.0 385.6 L186.0 389.0 L193.0 388.0 L200.0 380.4 L207.0 378.2 L214.0 387.0 L222.0 385.4 L229.0 384.4 L236.0 385.4 L243.0 382.6 L250.0 384.8 L258.0 380.2 L265.0 385.4 L272.0 382.4 L279.0 380.4 L287.0 386.0 L294.0 388.6 L301.0 387.2 L308.0 389.0 L316.0 376.4 L323.0 378.0 L330.0 382.4 L337.0 385.8 L345.0 385.4 L352.0 377.6 L359.0 376.4 L366.0 388.0 L370.0 390.0 L381.0 392.6 L395.0 384.6 L407.6 387.6 L420.0 386.2 L431.4 377.6 L442.6 383.0 L453.8 384.6 L460.6 388.0" fill="none" stroke="#f0c60a" stroke-width="1.6" stroke-linejoin="round"/><path d="M503.6 407.4 L510.4 404.6 L515.4 420.0 L525.4 469.6 L541.7 422.5 L547.0 410.0 L554.0 408.0" fill="none" stroke="#f0c60a" stroke-width="1.6" stroke-linejoin="round"/><path d="M842.8 405.2 L850.3 404.0 L862.9 395.2 L871.6 394.8 L880.4 399.0 L890.4 406.4 L900.0 407.4 L913.0 406.6 L921.7 400.2 L928.0 405.6 L937.0 405.2" fill="none" stroke="#f0c60a" stroke-width="1.6" stroke-linejoin="round"/><path d="M77.8 355.5 L85.0 355.4 L92.2 355.3 L99.5 355.3 L106.7 355.2 L113.9 355.2 L121.1 355.1 L128.3 355.1 L135.5 355.0 L142.8 355.0 L150.0 355.0 L157.2 355.0 L164.4 355.0 L171.6 355.0 L178.8 355.0 L186.1 355.0 L193.3 355.0 L200.5 355.0 L207.7 355.0 L214.9 355.1 L222.1 355.1 L229.4 355.2 L236.6 355.2 L243.8 355.3 L251.0 355.3 L258.2 355.4 L265.4 355.4 L272.6 355.5 L279.9 355.6 L287.1 355.6 L294.3 355.7 L301.5 355.7 L308.7 355.8 L315.9 355.9 L323.2 355.9 L330.4 355.9 L337.6 356.0 L344.8 356.0 L352.0 356.0 L359.2 356.1 L366.5 356.1 L373.7 356.1 L380.9 356.1 L388.1 356.1 L395.3 356.1 L402.5 356.0 L409.8 356.0 L417.0 356.0 L424.2 355.9 L431.4 355.9 L438.6 355.8 L445.8 355.8 L453.0 355.7 L460.3 355.7 L467.5 355.6 L474.7 355.6 L481.9 355.5 L489.1 355.4 L496.3 355.4 L503.6 355.3 L510.8 355.2 L518.0 355.2 L525.2 355.1 L532.4 355.1 L539.6 355.1 L546.9 355.0 L554.1 355.0 L561.3 355.0 L568.5 355.0 L575.7 355.0 L582.9 355.0 L590.2 355.0 L597.4 355.0 L604.6 355.0 L611.8 355.0 L619.0 355.0 L626.2 355.1 L633.4 355.1 L640.7 355.2 L647.9 355.2 L655.1 355.3 L662.3 355.3 L669.5 355.4 L676.7 355.5 L684.0 355.5 L691.2 355.6 L698.4 355.7 L705.6 355.7 L712.8 355.8 L720.0 355.8 L727.3 355.9 L734.5 355.9 L741.7 356.0 L748.9 356.0 L756.1 356.0 L763.3 356.1 L770.6 356.1 L777.8 356.1 L785.0 356.1 L792.2 356.1 L799.4 356.1 L806.6 356.0 L813.8 356.0 L821.1 356.0 L828.3 356.0 L835.5 355.9 L842.7 355.9 L849.9 355.8 L857.1 355.8 L864.4 355.7 L871.6 355.6 L878.8 355.6 L886.0 355.5 L893.2 355.5 L900.4 355.4 L907.7 355.3 L914.9 355.3 L922.1 355.2 L929.3 355.2 L936.5 355.1" fill="none" stroke="#8240a5" stroke-width="1.7" stroke-linejoin="miter" stroke-miterlimit="3" stroke-linecap="butt" stroke-opacity="1"/><path d="M75.5 250 V522" stroke="#d6ddee" stroke-width="1"/><path d="M942.5 250 V522" stroke="#e6e6e6" stroke-width="1"/><path d="M75 521.5 H943" stroke="#d6ddee" stroke-width="1"/><path d="M99.5 522 V531.5" stroke="#d6ddee" stroke-width="1"/><path d="M171.5 522 V531.5" stroke="#d6ddee" stroke-width="1"/><path d="M244.5 522 V531.5" stroke="#d6ddee" stroke-width="1"/><path d="M316.5 522 V531.5" stroke="#d6ddee" stroke-width="1"/><path d="M388.5 522 V531.5" stroke="#d6ddee" stroke-width="1"/><path d="M460.5 522 V531.5" stroke="#d6ddee" stroke-width="1"/><path d="M532.5 522 V531.5" stroke="#d6ddee" stroke-width="1"/><path d="M604.5 522 V531.5" stroke="#d6ddee" stroke-width="1"/><path d="M677.5 522 V531.5" stroke="#d6ddee" stroke-width="1"/><path d="M749.5 522 V531.5" stroke="#d6ddee" stroke-width="1"/><path d="M821.5 522 V531.5" stroke="#d6ddee" stroke-width="1"/><path d="M893.5 522 V531.5" stroke="#d6ddee" stroke-width="1"/></svg>
<div class="t" style="top:246.31px;font-size:9.2px;color:#454646;left:-136.00px;width:200px;text-align:right;transform-origin:100% 50%;transform:scaleX(0.9);">120.00 %</div>
<div class="t" style="top:337.31px;font-size:9.2px;color:#454646;left:-136.00px;width:200px;text-align:right;transform-origin:100% 50%;transform:scaleX(0.948);">80.00 %</div>
<div class="t" style="top:427.31px;font-size:9.2px;color:#454646;left:-136.00px;width:200px;text-align:right;transform-origin:100% 50%;transform:scaleX(0.948);">40.00 %</div>
<div class="t" style="top:517.31px;font-size:9.2px;color:#454646;left:-136.00px;width:200px;text-align:right;transform-origin:100% 50%;transform:scaleX(0.943);">0.00 %</div>
<div class="t" style="top:529.71px;font-size:9.2px;color:#454646;left:-100.40px;width:400px;text-align:center;transform-origin:50% 50%;transform:scaleX(0.834);">13:10</div>
<div class="t" style="top:529.71px;font-size:9.2px;color:#454646;left:-28.24px;width:400px;text-align:center;transform-origin:50% 50%;transform:scaleX(0.834);">13:20</div>
<div class="t" style="top:529.71px;font-size:9.2px;color:#454646;left:43.92px;width:400px;text-align:center;transform-origin:50% 50%;transform:scaleX(0.834);">13:30</div>
<div class="t" style="top:529.71px;font-size:9.2px;color:#454646;left:116.08px;width:400px;text-align:center;transform-origin:50% 50%;transform:scaleX(0.834);">13:40</div>
<div class="t" style="top:529.71px;font-size:9.2px;color:#454646;left:188.24px;width:400px;text-align:center;transform-origin:50% 50%;transform:scaleX(0.834);">13:50</div>
<div class="t" style="top:529.71px;font-size:9.2px;color:#454646;left:260.40px;width:400px;text-align:center;transform-origin:50% 50%;transform:scaleX(0.834);">14:00</div>
<div class="t" style="top:529.71px;font-size:9.2px;color:#454646;left:332.56px;width:400px;text-align:center;transform-origin:50% 50%;transform:scaleX(0.834);">14:10</div>
<div class="t" style="top:529.71px;font-size:9.2px;color:#454646;left:404.72px;width:400px;text-align:center;transform-origin:50% 50%;transform:scaleX(0.834);">14:20</div>
<div class="t" style="top:529.71px;font-size:9.2px;color:#454646;left:476.88px;width:400px;text-align:center;transform-origin:50% 50%;transform:scaleX(0.834);">14:30</div>
<div class="t" style="top:529.71px;font-size:9.2px;color:#454646;left:549.04px;width:400px;text-align:center;transform-origin:50% 50%;transform:scaleX(0.834);">14:40</div>
<div class="t" style="top:529.71px;font-size:9.2px;color:#454646;left:621.20px;width:400px;text-align:center;transform-origin:50% 50%;transform:scaleX(0.834);">14:50</div>
<div class="t" style="top:529.71px;font-size:9.2px;color:#454646;left:693.36px;width:400px;text-align:center;transform-origin:50% 50%;transform:scaleX(0.834);">15:00</div>
<svg style="left:0;top:0" width="1200" height="555"><path d="M982.60 26.95 L986.30 30.85 L990.00 26.95" fill="none" stroke="#00a1b2" stroke-width="1.8" stroke-linecap="round" stroke-linejoin="round"/></svg>
<div class="t" style="top:24.71px;font-size:9.2px;color:#454646;left:995.80px;transform-origin:0 50%;transform:scaleX(1.002);">Settings</div>
<div class="abs" style="left:1032px;top:31px;width:160px;height:1px;background:#8c8c8c"></div>
<div class="t" style="top:56.01px;font-size:9.2px;color:#454646;left:995.80px;transform-origin:0 50%;transform:scaleX(0.985);">Resolution</div>
<div class="box" style="left:996px;top:70px;width:196px;height:25px;border-color:#d6d6d6"></div>
<div class="t" style="top:76.53px;font-size:10.6px;color:#454646;left:1005.40px;transform-origin:0 50%;transform:scaleX(1.036);">Auto</div>
<svg style="left:0;top:0" width="1200" height="555"><path d="M1175.80 80.45 L1179.50 84.35 L1183.20 80.45" fill="none" stroke="#00a1b2" stroke-width="1.8" stroke-linecap="round" stroke-linejoin="round"/></svg>
<svg style="left:0;top:0" width="1200" height="555"><rect x="996.3" y="101.1" width="27.2" height="15" rx="7.5" fill="#fff" stroke="#1aa9b8" stroke-width="1.1"/><circle cx="1003.8" cy="108.6" r="4.2" fill="#454646"/><circle cx="1016.6" cy="108.6" r="2.45" fill="none" stroke="#6d6d6d" stroke-width="1"/></svg>
<div class="t" style="top:103.13px;font-size:10.6px;color:#454646;left:1029.00px;transform-origin:0 50%;transform:scaleX(0.989);">Show legend</div>
<svg style="left:0;top:0" width="1200" height="555"><rect x="996.3" y="124.1" width="27.2" height="15" rx="7.5" fill="#fff" stroke="#1aa9b8" stroke-width="1.1"/><circle cx="1003.8" cy="131.6" r="4.2" fill="#454646"/><circle cx="1016.6" cy="131.6" r="2.45" fill="none" stroke="#6d6d6d" stroke-width="1"/></svg>
<div class="t" style="top:127.03px;font-size:10.6px;color:#454646;left:1029.00px;transform-origin:0 50%;transform:scaleX(0.965);">Connect gaps</div>
<svg style="left:0;top:0" width="1200" height="555"><rect x="996" y="147.3" width="196" height="146.4" rx="3" fill="#e6e6e6"/></svg>
<div class="t" style="top:160.00px;font-size:13px;color:#00a1b2;font-weight:bold;left:1003.60px;transform-origin:0 50%;transform:scaleX(0.9);">A</div>
<div class="t" style="top:161.63px;font-size:10.6px;color:#454646;left:1020.00px;transform-origin:0 50%;transform:scaleX(0.921);">CPU usage %</div>
<svg style="left:0;top:0" width="1200" height="555"><g transform="translate(1087.2 161.5)"><path d="M2.3 7 L8.8 0 L12.3 3 L5.3 10 Z" fill="#00a1b2"/><path d="M1.9 7.6 L4.8 10.4 L0 11.8 Z" fill="#00a1b2"/><path d="M7.7 1.2 L11.2 4.2" stroke="#e6e6e6" stroke-width=".7"/></g></svg>
<svg style="left:0;top:0" width="1200" height="555"><path d="M1173.90 163.05 L1177.80 158.75 L1181.70 163.05" fill="none" stroke="#00a1b2" stroke-width="1.8" stroke-linecap="round" stroke-linejoin="round"/></svg>
<svg style="left:0;top:0" width="1200" height="555"><rect x="1003.6" y="184.50000000000003" width="126.3" height="23.1" rx="3" fill="#fff"/></svg>
<svg style="left:0;top:0" width="1200" height="555"><path d="M1014.6 189.3 V198.9 H1024.0" fill="none" stroke="#2b2b2b" stroke-width="1.4"/><path d="M1016.0 198.10000000000002 V192.9 L1018.0 194.9 L1020.4 192.10000000000002 L1021.8000000000001 193.5 L1024.0 190.9 V198.10000000000002 Z" fill="#2b2b2b"/></svg>
<div class="t" style="top:190.53px;font-size:10.6px;color:#454646;left:1027.00px;transform-origin:0 50%;transform:scaleX(0.92);">Area</div>
<svg style="left:0;top:0" width="1200" height="555"><path d="M1114.60 194.95 L1118.30 198.85 L1122.00 194.95" fill="none" stroke="#00a1b2" stroke-width="1.8" stroke-linecap="round" stroke-linejoin="round"/></svg>
<svg style="left:0;top:0" width="1200" height="555"><rect x="1135.6" y="184.50000000000003" width="48" height="23.1" rx="3" fill="#fff"/></svg>
<div class="abs" style="left:1144.8px;top:189.3px;width:15.2px;height:5px;background:#7c38a1"></div>
<div class="abs" style="left:1144.8px;top:194.3px;width:15.2px;height:5px;background:#fff29a"></div>
<div class="abs" style="left:1144.8px;top:199.3px;width:15.2px;height:5px;background:#4fd5e0"></div>
<svg style="left:0;top:0" width="1200" height="555"><path d="M1169.10 194.95 L1172.80 198.85 L1176.50 194.95" fill="none" stroke="#00a1b2" stroke-width="1.8" stroke-linecap="round" stroke-linejoin="round"/></svg>
<div class="t" style="top:217.51px;font-size:9.2px;color:#454646;left:1003.80px;transform-origin:0 50%;transform:scaleX(1.033);">Unit</div>
<div class="t" style="top:217.51px;font-size:9.2px;color:#454646;left:1093.80px;transform-origin:0 50%;transform:scaleX(0.982);">Format</div>
<svg style="left:0;top:0" width="1200" height="555"><rect x="1003.6" y="232.10000000000002" width="89.6" height="23.1" rx="3" fill="#fff"/></svg>
<svg style="left:0;top:0" width="1200" height="555"><rect x="1094.9" y="232.10000000000002" width="88.7" height="23.1" rx="3" fill="#fff"/></svg>
<div class="t" style="top:238.63px;font-size:10.6px;color:#454646;left:1013.30px;transform-origin:0 50%;transform:scaleX(1.036);">Auto</div>
<div class="t" style="top:237.83px;font-size:10.6px;color:#454646;left:1103.60px;transform-origin:0 50%;transform:scaleX(1.036);">Auto</div>
<svg style="left:0;top:0" width="1200" height="555"><path d="M1078.60 242.35 L1082.30 246.25 L1086.00 242.35" fill="none" stroke="#00a1b2" stroke-width="1.8" stroke-linecap="round" stroke-linejoin="round"/></svg>
<svg style="left:0;top:0" width="1200" height="555"><path d="M1168.30 242.35 L1172.00 246.25 L1175.70 242.35" fill="none" stroke="#00a1b2" stroke-width="1.8" stroke-linecap="round" stroke-linejoin="round"/></svg>
<div class="abs" style="left:1003.3px;top:262.1px;width:180.4px;height:24.6px;border:1px solid #00a1b2;border-radius:3px"></div>
<div class="t" style="top:268.53px;font-size:10.6px;color:#00a1b2;left:893.50px;width:400px;text-align:center;transform-origin:50% 50%;transform:scaleX(1.008);">Add color override</div>
<svg style="left:0;top:0" width="1200" height="555"><rect x="996" y="297.1" width="196" height="147.2" rx="3" fill="#e6e6e6"/></svg>
<div class="t" style="top:309.80px;font-size:13px;color:#00a1b2;font-weight:bold;left:1003.60px;transform-origin:0 50%;transform:scaleX(0.9);">B</div>
<div class="t" style="top:311.43px;font-size:10.6px;color:#454646;left:1020.00px;transform-origin:0 50%;transform:scaleX(0.996);">Memory used %</div>
<svg style="left:0;top:0" width="1200" height="555"><g transform="translate(1102.6 311.3)"><path d="M2.3 7 L8.8 0 L12.3 3 L5.3 10 Z" fill="#00a1b2"/><path d="M1.9 7.6 L4.8 10.4 L0 11.8 Z" fill="#00a1b2"/><path d="M7.7 1.2 L11.2 4.2" stroke="#e6e6e6" stroke-width=".7"/></g></svg>
<svg style="left:0;top:0" width="1200" height="555"><path d="M1173.90 312.85 L1177.80 308.55 L1181.70 312.85" fill="none" stroke="#00a1b2" stroke-width="1.8" stroke-linecap="round" stroke-linejoin="round"/></svg>
<svg style="left:0;top:0" width="1200" height="555"><rect x="1003.6" y="334.3" width="126.3" height="23.1" rx="3" fill="#fff"/></svg>
<svg style="left:0;top:0" width="1200" height="555"><path d="M1014.6 339.1 V348.70000000000005 H1024.0" fill="none" stroke="#2b2b2b" stroke-width="1.4"/><path d="M1016.8000000000001 346.1 L1019.2 342.70000000000005 L1021.0 344.3 L1024.0 340.5" fill="none" stroke="#2b2b2b" stroke-width="1.4" stroke-linejoin="round"/></svg>
<div class="t" style="top:340.33px;font-size:10.6px;color:#454646;left:1027.00px;transform-origin:0 50%;transform:scaleX(0.958);">Line</div>
<svg style="left:0;top:0" width="1200" height="555"><path d="M1114.60 344.75 L1118.30 348.65 L1122.00 344.75" fill="none" stroke="#00a1b2" stroke-width="1.8" stroke-linecap="round" stroke-linejoin="round"/></svg>
<svg style="left:0;top:0" width="1200" height="555"><rect x="1135.6" y="334.3" width="48" height="23.1" rx="3" fill="#fff"/></svg>
<div class="abs" style="left:1144.8px;top:339.1px;width:15.2px;height:5px;background:#7c38a1"></div>
<div class="abs" style="left:1144.8px;top:344.1px;width:15.2px;height:5px;background:#fff29a"></div>
<div class="abs" style="left:1144.8px;top:349.1px;width:15.2px;height:5px;background:#4fd5e0"></div>
<svg style="left:0;top:0" width="1200" height="555"><path d="M1169.10 344.75 L1172.80 348.65 L1176.50 344.75" fill="none" stroke="#00a1b2" stroke-width="1.8" stroke-linecap="round" stroke-linejoin="round"/></svg>
<div class="t" style="top:367.31px;font-size:9.2px;color:#454646;left:1003.80px;transform-origin:0 50%;transform:scaleX(1.033);">Unit</div>
<div class="t" style="top:367.31px;font-size:9.2px;color:#454646;left:1093.80px;transform-origin:0 50%;transform:scaleX(0.982);">Format</div>
<svg style="left:0;top:0" width="1200" height="555"><rect x="1003.6" y="382.8" width="89.6" height="23.1" rx="3" fill="#fff"/></svg>
<svg style="left:0;top:0" width="1200" height="555"><rect x="1094.9" y="382.8" width="88.7" height="23.1" rx="3" fill="#fff"/></svg>
<div class="t" style="top:389.33px;font-size:10.6px;color:#454646;left:1013.30px;transform-origin:0 50%;transform:scaleX(1.036);">Auto</div>
<div class="t" style="top:388.53px;font-size:10.6px;color:#454646;left:1103.60px;transform-origin:0 50%;transform:scaleX(1.036);">Auto</div>
<svg style="left:0;top:0" width="1200" height="555"><path d="M1078.60 393.05 L1082.30 396.95 L1086.00 393.05" fill="none" stroke="#00a1b2" stroke-width="1.8" stroke-linecap="round" stroke-linejoin="round"/></svg>
<svg style="left:0;top:0" width="1200" height="555"><path d="M1168.30 393.05 L1172.00 396.95 L1175.70 393.05" fill="none" stroke="#00a1b2" stroke-width="1.8" stroke-linecap="round" stroke-linejoin="round"/></svg>
<div class="abs" style="left:1003.3px;top:412.6px;width:180.4px;height:24.6px;border:1px solid #00a1b2;border-radius:3px"></div>
<div class="t" style="top:419.03px;font-size:10.6px;color:#00a1b2;left:893.50px;width:400px;text-align:center;transform-origin:50% 50%;transform:scaleX(1.008);">Add color override</div>
<svg style="left:0;top:0" width="1200" height="555"><path d="M984.05 457.70 L987.95 461.30 L984.05 464.90" fill="none" stroke="#00a1b2" stroke-width="1.8" stroke-linecap="round" stroke-linejoin="round"/></svg>
<div class="t" style="top:457.51px;font-size:9.2px;color:#454646;left:995.60px;transform-origin:0 50%;transform:scaleX(0.895);">Axes</div>
<div class="abs" style="left:1017.5px;top:463px;width:174.5px;height:1px;background:#8c8c8c"></div>
<svg style="left:0;top:0" width="1200" height="555"><path d="M984.05 490.30 L987.95 493.90 L984.05 497.50" fill="none" stroke="#00a1b2" stroke-width="1.8" stroke-linecap="round" stroke-linejoin="round"/></svg>
<div class="t" style="top:490.31px;font-size:9.2px;color:#454646;left:995.60px;transform-origin:0 50%;transform:scaleX(0.968);">Threshold</div>
<div class="abs" style="left:1038px;top:496px;width:154px;height:1px;background:#8c8c8c"></div>
</body>
</html>
